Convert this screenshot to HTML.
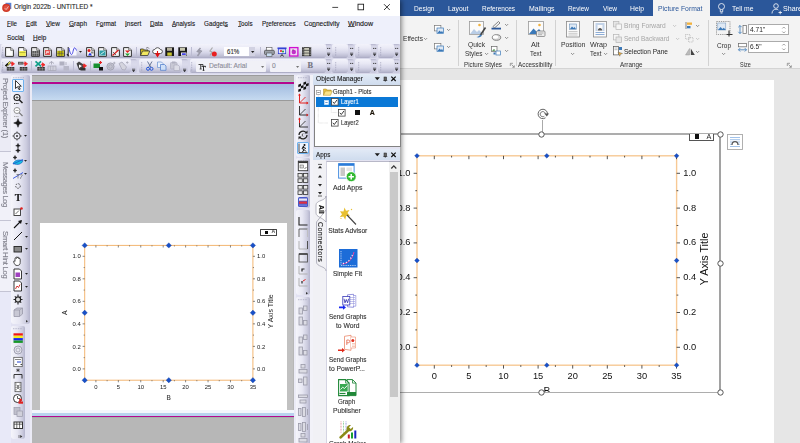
<!DOCTYPE html>
<html><head><meta charset="utf-8"><title>Origin 2022b and Word</title>
<style>
html,body{margin:0;padding:0}
body{width:800px;height:443px;position:relative;overflow:hidden;background:#e6e6e6;font-family:"Liberation Sans",sans-serif}
.a{position:absolute}
.t{position:absolute;white-space:nowrap;line-height:1}
svg{overflow:visible}
svg text{font-family:"Liberation Sans",sans-serif}
u{text-decoration-thickness:0.45px;text-underline-offset:0.4px;text-decoration-color:#555}
#og .t{-webkit-text-stroke:0.12px currentColor}
</style></head><body>
<div class="a" id="wd" style="left:0;top:0;width:800px;height:443px;will-change:transform">
<div class="a" style="left:400px;top:0px;width:400px;height:16.3px;background:#2b579a;"></div>
<div class="a" style="left:400px;top:16.3px;width:400px;height:52.9px;background:#f3f3f3;border-bottom:1px solid #d4d4d4;box-sizing:border-box;"></div>
<div class="a" style="left:652.5px;top:0px;width:57px;height:17px;background:#f3f3f3;"></div>
<div class="t" style="left:413.50px;top:6.03px;font-size:6.9px;color:#fff;transform-origin:0 0;transform:scaleX(0.9544);">Design</div>
<div class="t" style="left:447.50px;top:6.03px;font-size:6.9px;color:#fff;transform-origin:0 0;transform:scaleX(0.9895);">Layout</div>
<div class="t" style="left:481.50px;top:6.03px;font-size:6.9px;color:#fff;transform-origin:0 0;transform:scaleX(0.9352);">References</div>
<div class="t" style="left:528.50px;top:6.03px;font-size:6.9px;color:#fff;transform-origin:0 0;transform:scaleX(1.0075);">Mailings</div>
<div class="t" style="left:567.50px;top:6.03px;font-size:6.9px;color:#fff;transform-origin:0 0;transform:scaleX(0.9282);">Review</div>
<div class="t" style="left:602.50px;top:6.03px;font-size:6.9px;color:#fff;transform-origin:0 0;transform:scaleX(0.9439);">View</div>
<div class="t" style="left:629.50px;top:6.03px;font-size:6.9px;color:#fff;transform-origin:0 0;transform:scaleX(0.9865);">Help</div>
<div class="t" style="left:732.00px;top:6.03px;font-size:6.9px;color:#fff;transform-origin:0 0;transform:scaleX(0.9837);">Tell me</div>
<div class="t" style="left:783.00px;top:6.03px;font-size:6.9px;color:#fff;transform-origin:0 0;transform:scaleX(1.0319);">Share</div>
<div class="t" style="left:658.00px;top:6.03px;font-size:6.9px;color:#2b579a;transform-origin:0 0;transform:scaleX(0.9835);">Picture Format</div>
<svg class="a" style="left:717px;top:2px;" width="10" height="13" viewBox="0 0 10 13"><circle cx="4.5" cy="4.5" r="3" fill="none" stroke="#fff" stroke-width="0.8"/><path d="M3.3 7.5v2.3h2.4V7.5M3.5 11h2" fill="none" stroke="#fff" stroke-width="0.8"/></svg>
<svg class="a" style="left:771px;top:2px;" width="11" height="13" viewBox="0 0 11 13"><circle cx="5" cy="4" r="2.3" fill="none" stroke="#fff" stroke-width="0.8"/><path d="M1 11.5c0-3 2-4.3 4-4.3 1 0 1.700 .3 2.300 .8M7.500 10.500h3.500M9.200 8.800v3.500" fill="none" stroke="#fff" stroke-width="0.8"/></svg>
<div class="t" style="left:402.50px;top:35.03px;font-size:7.3px;color:#303030;transform-origin:0 0;transform:scaleX(0.9016);">Effects</div>
<svg class="a" style="left:424.3px;top:37.8px;" width="4" height="3" viewBox="0 0 4 3"><path d="M0 0l1.600 1.600l1.600 -1.600" fill="none" stroke="#555" stroke-width="0.6"/></svg>
<svg class="a" style="left:433.7px;top:25px;" width="10" height="9" viewBox="0 0 10 9"><rect x="0.4" y="0.4" width="6.5" height="5.5" fill="#fff" stroke="#777" stroke-width="0.7"/><rect x="3" y="3" width="6.500" height="5.500" fill="#dfe9f4" stroke="#3a78b8" stroke-width="0.7"/><path d="M3.500 8l2-2.500 1.500 1.500 1-1 1.300 2z" fill="#3a78b8"/></svg>
<svg class="a" style="left:446.5px;top:28.5px;" width="4" height="3" viewBox="0 0 4 3"><path d="M0 0l1.600 1.600l1.600 -1.600" fill="none" stroke="#555" stroke-width="0.6"/></svg>
<svg class="a" style="left:433.7px;top:42.5px;" width="10" height="9" viewBox="0 0 10 9"><rect x="0.4" y="0.4" width="6.5" height="5.5" fill="#fff" stroke="#777" stroke-width="0.7"/><rect x="3" y="3" width="6.500" height="5.500" fill="#dfe9f4" stroke="#3a78b8" stroke-width="0.7"/><path d="M3.500 8l2-2.500 1.500 1.500 1-1 1.300 2z" fill="#3a78b8"/></svg>
<svg class="a" style="left:446.5px;top:46px;" width="4" height="3" viewBox="0 0 4 3"><path d="M0 0l1.600 1.600l1.600 -1.600" fill="none" stroke="#555" stroke-width="0.6"/></svg>
<div class="a" style="left:458.2px;top:20px;width:0.8px;height:46px;background:#d2d2d2;"></div>
<svg class="a" style="left:468.5px;top:21px;" width="18" height="17" viewBox="0 0 18 17"><rect x="0.5" y="0.5" width="14" height="13" fill="#fbfbfb" stroke="#9a9a9a" stroke-width="0.8"/><path d="M1 13l4-5 3 3 2-2 4 4z" fill="#b9cde6"/><circle cx="10.500" cy="4" r="1.300" fill="#f2b13c"/><path d="M16.500 6.500l-5 7.500" stroke="#444" stroke-width="1.600"/><path d="M11.800 13.500c-1 .5-2.500 2.500-4.500 2.500 2.500 1 5 0 5.500-1.800z" fill="#3a78b8"/></svg>
<div class="t" style="left:468.20px;top:40.93px;font-size:7.3px;color:#303030;transform-origin:0 0;transform:scaleX(0.9110);">Quick</div>
<div class="t" style="left:464.55px;top:50.33px;font-size:7.3px;color:#303030;transform-origin:0 0;transform:scaleX(0.8803);">Styles</div>
<svg class="a" style="left:484.5px;top:52.5px;" width="4" height="3" viewBox="0 0 4 3"><path d="M0 0l1.600 1.600l1.600 -1.600" fill="none" stroke="#555" stroke-width="0.6"/></svg>
<svg class="a" style="left:491px;top:20.8px;" width="11" height="8" viewBox="0 0 11 8"><path d="M0.500 7.600h9.500" stroke="#2b579a" stroke-width="1.800"/><path d="M2 5.500l5.500-5 1.500 1.500-5.500 5z" fill="none" stroke="#555" stroke-width="0.7"/></svg>
<svg class="a" style="left:505px;top:24px;" width="4" height="3" viewBox="0 0 4 3"><path d="M0 0l1.600 1.600l1.600 -1.600" fill="none" stroke="#555" stroke-width="0.6"/></svg>
<svg class="a" style="left:491px;top:33.5px;" width="11" height="8" viewBox="0 0 11 8"><ellipse cx="5.500" cy="3.500" rx="4.200" ry="2.800" fill="#d8d8d8" stroke="#666" stroke-width="0.8"/><ellipse cx="4.500" cy="3" rx="2.800" ry="1.800" fill="#fff"/></svg>
<svg class="a" style="left:505px;top:37px;" width="4" height="3" viewBox="0 0 4 3"><path d="M0 0l1.600 1.600l1.600 -1.600" fill="none" stroke="#555" stroke-width="0.6"/></svg>
<svg class="a" style="left:491px;top:46px;" width="11" height="10" viewBox="0 0 11 10"><rect x="0.500" y="0.500" width="5.500" height="5" fill="#fff" stroke="#666" stroke-width="0.7"/><path d="M1 5l2-2 1.500 1.500z" fill="#3a8a3a"/><rect x="5" y="5" width="4.500" height="4" fill="#fff" stroke="#3a78b8" stroke-width="0.7"/><rect x="2.500" y="6.500" width="2" height="2" fill="#3a78b8"/></svg>
<svg class="a" style="left:505px;top:49.7px;" width="4" height="3" viewBox="0 0 4 3"><path d="M0 0l1.600 1.600l1.600 -1.600" fill="none" stroke="#555" stroke-width="0.6"/></svg>
<div class="t" style="left:463.70px;top:61.58px;font-size:6.6px;color:#303030;transform-origin:0 0;transform:scaleX(0.9418);">Picture Styles</div>
<svg class="a" style="left:510px;top:62.5px;" width="5" height="5" viewBox="0 0 5 5"><path d="M0.300 3V0.300H3M1.500 1.500l2.700 2.700M4.300 2.300v2h-2" fill="none" stroke="#666" stroke-width="0.6"/></svg>
<div class="a" style="left:515.5px;top:20px;width:0.8px;height:46px;background:#d2d2d2;"></div>
<svg class="a" style="left:527.5px;top:21px;" width="18" height="17" viewBox="0 0 18 17"><rect x="0.500" y="0.500" width="15" height="13" fill="#fbfbfb" stroke="#9a9a9a" stroke-width="0.8"/><path d="M1 13l4.500-5.500 3 3 2.500-2.500 4 5z" fill="#3a78b8"/><circle cx="11.500" cy="4" r="1.300" fill="#f2b13c"/><rect x="8.500" y="10" width="8.500" height="5.500" rx="1" fill="#ececec" stroke="#777" stroke-width="0.7"/><path d="M10 12h5.500M10 13.700h4" stroke="#888" stroke-width="0.6"/></svg>
<div class="t" style="left:531.05px;top:41.03px;font-size:7.3px;color:#303030;">Alt</div>
<div class="t" style="left:529.55px;top:50.33px;font-size:7.3px;color:#303030;transform-origin:0 0;transform:scaleX(0.8590);">Text</div>
<div class="t" style="left:518.00px;top:61.58px;font-size:6.6px;color:#303030;transform-origin:0 0;transform:scaleX(0.9598);">Accessibility</div>
<div class="a" style="left:554.5px;top:20px;width:0.8px;height:46px;background:#d2d2d2;"></div>
<svg class="a" style="left:566px;top:21px;" width="15" height="17" viewBox="0 0 15 17"><rect x="0.500" y="0.500" width="13" height="15.500" fill="#fbfbfb" stroke="#8a8a8a" stroke-width="0.8"/><rect x="3.500" y="3" width="7" height="5.500" fill="#dfe9f4" stroke="#6a8fb8" stroke-width="0.6"/><path d="M4 8l2-2.500 1.500 1.500 1-1 1.500 2z" fill="#3a78b8"/><path d="M2.500 10.500h9M2.500 12.300h9M2.500 14h9" stroke="#aaa" stroke-width="0.6"/></svg>
<div class="t" style="left:560.70px;top:41.03px;font-size:7.3px;color:#303030;transform-origin:0 0;transform:scaleX(0.9356);">Position</div>
<svg class="a" style="left:571.3px;top:52.5px;" width="4" height="3" viewBox="0 0 4 3"><path d="M0 0l1.600 1.600l1.600 -1.600" fill="none" stroke="#555" stroke-width="0.6"/></svg>
<svg class="a" style="left:592.5px;top:21px;" width="15" height="17" viewBox="0 0 15 17"><rect x="0.500" y="0.500" width="13" height="15.500" fill="#fbfbfb" stroke="#8a8a8a" stroke-width="0.8"/><path d="M2.500 3h9M2.500 5h2M9.500 5h2M2.500 7h2M9.500 7h2M2.500 9h2M9.500 9h2M2.500 11.500h9M2.500 13.500h9" stroke="#5b8ac5" stroke-width="0.7"/><path d="M4.800 9.500c0-3.500 4.400-3.500 4.400 0z" fill="#555"/></svg>
<div class="t" style="left:590.00px;top:41.03px;font-size:7.3px;color:#303030;transform-origin:0 0;transform:scaleX(0.9821);">Wrap</div>
<div class="t" style="left:590.00px;top:50.33px;font-size:7.3px;color:#303030;transform-origin:0 0;transform:scaleX(0.8590);">Text</div>
<svg class="a" style="left:603.5px;top:52.5px;" width="4" height="3" viewBox="0 0 4 3"><path d="M0 0l1.600 1.600l1.600 -1.600" fill="none" stroke="#555" stroke-width="0.6"/></svg>
<svg class="a" style="left:612.5px;top:20.5px;" width="10" height="9" viewBox="0 0 10 9"><rect x="0.400" y="0.400" width="5.500" height="5.500" fill="#e6e6e6" stroke="#b5b5b5" stroke-width="0.7"/><rect x="3" y="3" width="5.500" height="5.500" fill="#f6f6f6" stroke="#b5b5b5" stroke-width="0.7"/></svg>
<div class="t" style="left:623.50px;top:21.63px;font-size:7.3px;color:#a6a6a6;transform-origin:0 0;transform:scaleX(0.9118);">Bring Forward</div>
<svg class="a" style="left:672.5px;top:24.5px;" width="4" height="3" viewBox="0 0 4 3"><path d="M0 0l1.600 1.600l1.600 -1.600" fill="none" stroke="#b0b0b0" stroke-width="0.6"/></svg>
<svg class="a" style="left:612.5px;top:33.5px;" width="10" height="9" viewBox="0 0 10 9"><rect x="0.400" y="0.400" width="5.500" height="5.500" fill="#f6f6f6" stroke="#b5b5b5" stroke-width="0.7"/><rect x="3" y="3" width="5.500" height="5.500" fill="#e6e6e6" stroke="#b5b5b5" stroke-width="0.7"/></svg>
<div class="t" style="left:623.50px;top:34.63px;font-size:7.3px;color:#a6a6a6;transform-origin:0 0;transform:scaleX(0.8899);">Send Backward</div>
<svg class="a" style="left:675.5px;top:37.5px;" width="4" height="3" viewBox="0 0 4 3"><path d="M0 0l1.600 1.600l1.600 -1.600" fill="none" stroke="#b0b0b0" stroke-width="0.6"/></svg>
<svg class="a" style="left:612.5px;top:46px;" width="10" height="10" viewBox="0 0 10 10"><rect x="0.400" y="0.400" width="5" height="8.500" fill="#fff" stroke="#555" stroke-width="0.7"/><path d="M1.500 2h3M1.500 3.700h3" stroke="#777" stroke-width="0.5"/><path d="M5 6l4.500 1.500-2 .7-.7 2z" fill="#f2b13c" stroke="#555" stroke-width="0.4"/><rect x="6" y="1" width="3" height="3" fill="#3a78b8"/></svg>
<div class="t" style="left:623.50px;top:47.63px;font-size:7.3px;color:#262626;transform-origin:0 0;transform:scaleX(0.8960);">Selection Pane</div>
<svg class="a" style="left:685px;top:20.5px;" width="9" height="9" viewBox="0 0 9 9"><path d="M1 1v7" stroke="#555" stroke-width="0.7"/><rect x="2" y="1.500" width="5" height="2.300" fill="#f2b13c"/><rect x="2" y="5" width="3.500" height="2.300" fill="#3a78b8"/></svg>
<svg class="a" style="left:695.5px;top:24.5px;" width="4" height="3" viewBox="0 0 4 3"><path d="M0 0l1.600 1.600l1.600 -1.600" fill="none" stroke="#555" stroke-width="0.6"/></svg>
<svg class="a" style="left:685px;top:33.5px;" width="9" height="9" viewBox="0 0 9 9"><rect x="0.500" y="0.500" width="4.500" height="4.500" fill="none" stroke="#b0b0b0" stroke-width="0.7" stroke-dasharray="1 0.700"/><rect x="3.500" y="3.500" width="4.500" height="4.500" fill="none" stroke="#b0b0b0" stroke-width="0.7" stroke-dasharray="1 0.700"/></svg>
<svg class="a" style="left:695.5px;top:37.5px;" width="4" height="3" viewBox="0 0 4 3"><path d="M0 0l1.600 1.600l1.600 -1.600" fill="none" stroke="#b0b0b0" stroke-width="0.6"/></svg>
<svg class="a" style="left:685px;top:46.5px;" width="10" height="9" viewBox="0 0 10 9"><path d="M0.500 8l4-6.500v6.500z" fill="#bbb" stroke="#888" stroke-width="0.4"/><path d="M5.800 1.500v6.500h4z" fill="#444"/></svg>
<svg class="a" style="left:695.5px;top:50.5px;" width="4" height="3" viewBox="0 0 4 3"><path d="M0 0l1.600 1.600l1.600 -1.600" fill="none" stroke="#555" stroke-width="0.6"/></svg>
<div class="t" style="left:620.00px;top:61.58px;font-size:6.6px;color:#303030;transform-origin:0 0;transform:scaleX(0.9582);">Arrange</div>
<div class="a" style="left:707.5px;top:20px;width:0.8px;height:46px;background:#d2d2d2;"></div>
<svg class="a" style="left:716px;top:21px;" width="17" height="17" viewBox="0 0 17 17"><rect x="0.500" y="0.500" width="13.500" height="13" fill="none" stroke="#777" stroke-width="0.7" stroke-dasharray="1.300 0.900"/><rect x="1.800" y="2" width="8" height="7" fill="#dfe9f4" stroke="#6a8fb8" stroke-width="0.5"/><path d="M2 9l2.500-3 2 2 1.300-1.300 2 2.300z" fill="#3a78b8"/><path d="M13 9.500v6M10.500 13.500h6" stroke="#333" stroke-width="1.100" fill="none"/></svg>
<div class="t" style="left:717.00px;top:41.53px;font-size:7.3px;color:#303030;transform-origin:0 0;transform:scaleX(0.8848);">Crop</div>
<svg class="a" style="left:722.3px;top:52.5px;" width="4" height="3" viewBox="0 0 4 3"><path d="M0 0l1.600 1.600l1.600 -1.600" fill="none" stroke="#555" stroke-width="0.6"/></svg>
<svg class="a" style="left:737.5px;top:25px;" width="9" height="9" viewBox="0 0 9 9"><path d="M2 0.500v8M0.300 2.200l1.700-1.700 1.700 1.700M0.300 6.800l1.700 1.700 1.700-1.700" fill="none" stroke="#3a78b8" stroke-width="0.8"/><rect x="5" y="0.500" width="3.300" height="8" fill="#fff" stroke="#666" stroke-width="0.7"/></svg>
<svg class="a" style="left:737.5px;top:42.5px;" width="9" height="9" viewBox="0 0 9 9"><rect x="0.500" y="0.500" width="8" height="3.300" fill="#fff" stroke="#666" stroke-width="0.7"/><path d="M0.500 6.800h8M2.200 5.100l-1.700 1.700 1.700 1.700M6.800 5.100l1.700 1.700-1.700 1.700" fill="none" stroke="#3a78b8" stroke-width="0.8"/></svg>
<div class="a" style="left:748px;top:23.7px;width:40.5px;height:11.8px;background:#fff;border:0.8px solid #ababab;box-sizing:border-box;"></div>
<div class="t" style="left:750.00px;top:26.68px;font-size:6.6px;color:#262626;">4.71&quot;</div>
<svg class="a" style="left:782.3px;top:25.7px;" width="4" height="8" viewBox="0 0 4 8"><path d="M0.300 2.500l1.500-1.500 1.500 1.500M0.300 5.500l1.500 1.500 1.500-1.500" fill="none" stroke="#666" stroke-width="0.6"/></svg>
<div class="a" style="left:748px;top:41px;width:40.5px;height:11.8px;background:#fff;border:0.8px solid #ababab;box-sizing:border-box;"></div>
<div class="t" style="left:750.00px;top:43.98px;font-size:6.6px;color:#262626;">6.5&quot;</div>
<svg class="a" style="left:782.3px;top:43px;" width="4" height="8" viewBox="0 0 4 8"><path d="M0.300 2.500l1.500-1.500 1.500 1.500M0.300 5.500l1.500 1.500 1.500-1.500" fill="none" stroke="#666" stroke-width="0.6"/></svg>
<div class="t" style="left:740.00px;top:61.58px;font-size:6.6px;color:#303030;transform-origin:0 0;transform:scaleX(0.8334);">Size</div>
<svg class="a" style="left:787px;top:62.5px;" width="5" height="5" viewBox="0 0 5 5"><path d="M0.300 3V0.300H3M1.500 1.500l2.700 2.700M4.300 2.300v2h-2" fill="none" stroke="#666" stroke-width="0.6"/></svg>
<div class="a" style="left:400px;top:79.5px;width:374.3px;height:364px;background:#fff;"></div>
<div class="a" style="left:380px;top:133.4px;width:340px;height:1.2px;background:#adadad;"></div>
<div class="a" style="left:380px;top:392.2px;width:340px;height:1.2px;background:#adadad;"></div>
<div class="a" style="left:719.4px;top:134px;width:1.2px;height:259px;background:#a2a2a2;"></div>
<div class="a" style="left:541.7px;top:120px;width:0.9px;height:13px;background:#aaa;"></div>
<svg class="a" style="left:535.5px;top:107.5px;" width="14" height="14" viewBox="0 0 14 14"><path d="M9.500 9.800A4.700 4.700 0 1 1 11.500 6" fill="none" stroke="#555" stroke-width="0.9"/><path d="M8.300 8.300A2.600 2.600 0 1 1 9.400 6" fill="none" stroke="#555" stroke-width="0.8"/><path d="M8.300 5.500h4.800l-2.300 2.900z" fill="#555"/></svg>
<div class="a" style="left:688.8px;top:134.2px;width:24.8px;height:7.2px;background:#fff;border:0.8px solid #555;border-top:none;box-sizing:border-box;"></div>
<div class="a" style="left:695px;top:134.3px;width:4.3px;height:4.5px;background:#111;"></div>
<div class="t" style="left:706.50px;top:133.48px;font-size:7.2px;color:#222;">A</div>
<svg class="a" style="left:727px;top:134px;" width="16" height="16" viewBox="0 0 16 16"><rect x="0.500" y="0.500" width="15" height="15" fill="#fff" stroke="#a8a8a8" stroke-width="0.9"/><path d="M3 3.500h10M3 5.700h10M3 8h10M3 10.300h10M3 12.500h10" stroke="#8ab4e6" stroke-width="0.8"/><path d="M5 11c0-4.500 6-4.500 6 0" fill="#fff" stroke="#555" stroke-width="1.200"/></svg>
<svg class="a" style="left:0px;top:0px;" width="800" height="443" viewBox="0 0 800 443"><rect x="417" y="155.8" width="259.6" height="209.39999999999998" fill="none" stroke="#f7c995" stroke-width="1.4"/><path d="M434.30 365.2v3.40M434.30 155.8v3.40M451.60 365.2v1.70M451.60 155.8v1.70M468.90 365.2v3.40M468.90 155.8v3.40M486.20 365.2v1.70M486.20 155.8v1.70M503.50 365.2v3.40M503.50 155.8v3.40M520.80 365.2v1.70M520.80 155.8v1.70M538.10 365.2v3.40M538.10 155.8v3.40M555.40 365.2v1.70M555.40 155.8v1.70M572.70 365.2v3.40M572.70 155.8v3.40M590.00 365.2v1.70M590.00 155.8v1.70M607.30 365.2v3.40M607.30 155.8v3.40M624.60 365.2v1.70M624.60 155.8v1.70M641.90 365.2v3.40M641.90 155.8v3.40M659.20 365.2v1.70M659.20 155.8v1.70M676.50 365.2v3.40M676.50 155.8v3.40M417 347.30h-3.40M676.6 347.30h3.40M417 329.90h-1.70M676.6 329.90h1.70M417 312.50h-3.40M676.6 312.50h3.40M417 295.10h-1.70M676.6 295.10h1.70M417 277.70h-3.40M676.6 277.70h3.40M417 260.30h-1.70M676.6 260.30h1.70M417 242.90h-3.40M676.6 242.90h3.40M417 225.50h-1.70M676.6 225.50h1.70M417 208.10h-3.40M676.6 208.10h3.40M417 190.70h-1.70M676.6 190.70h1.70M417 173.30h-3.40M676.6 173.30h3.40" stroke="#333" stroke-width="0.84" fill="none"/><text x="434.30" y="379.20" font-size="9.3" text-anchor="middle" fill="#111">0</text><text x="468.90" y="379.20" font-size="9.3" text-anchor="middle" fill="#111">5</text><text x="503.50" y="379.20" font-size="9.3" text-anchor="middle" fill="#111">10</text><text x="538.10" y="379.20" font-size="9.3" text-anchor="middle" fill="#111">15</text><text x="572.70" y="379.20" font-size="9.3" text-anchor="middle" fill="#111">20</text><text x="607.30" y="379.20" font-size="9.3" text-anchor="middle" fill="#111">25</text><text x="641.90" y="379.20" font-size="9.3" text-anchor="middle" fill="#111">30</text><text x="676.50" y="379.20" font-size="9.3" text-anchor="middle" fill="#111">35</text><text x="410.50" y="349.75" font-size="9.3" text-anchor="end" fill="#111">0.0</text><text x="683.30" y="349.75" font-size="9.3" text-anchor="start" fill="#111">0.0</text><text x="410.50" y="314.95" font-size="9.3" text-anchor="end" fill="#111">0.2</text><text x="683.30" y="314.95" font-size="9.3" text-anchor="start" fill="#111">0.2</text><text x="410.50" y="280.15" font-size="9.3" text-anchor="end" fill="#111">0.4</text><text x="683.30" y="280.15" font-size="9.3" text-anchor="start" fill="#111">0.4</text><text x="410.50" y="245.35" font-size="9.3" text-anchor="end" fill="#111">0.6</text><text x="683.30" y="245.35" font-size="9.3" text-anchor="start" fill="#111">0.6</text><text x="410.50" y="210.55" font-size="9.3" text-anchor="end" fill="#111">0.8</text><text x="683.30" y="210.55" font-size="9.3" text-anchor="start" fill="#111">0.8</text><text x="410.50" y="175.75" font-size="9.3" text-anchor="end" fill="#111">1.0</text><text x="683.30" y="175.75" font-size="9.3" text-anchor="start" fill="#111">1.0</text><text transform="translate(707.60 258.90) rotate(-90)" font-size="10.8" text-anchor="middle" fill="#111">Y Axis Title</text><path d="M414.60 155.80L417.00 153.40L419.40 155.80L417.00 158.20z" fill="#1850c8" stroke="#0d3a94" stroke-width="0.3"/><path d="M544.40 155.80L546.80 153.40L549.20 155.80L546.80 158.20z" fill="#1850c8" stroke="#0d3a94" stroke-width="0.3"/><path d="M674.20 155.80L676.60 153.40L679.00 155.80L676.60 158.20z" fill="#1850c8" stroke="#0d3a94" stroke-width="0.3"/><path d="M414.60 260.50L417.00 258.10L419.40 260.50L417.00 262.90z" fill="#1850c8" stroke="#0d3a94" stroke-width="0.3"/><path d="M674.20 260.50L676.60 258.10L679.00 260.50L676.60 262.90z" fill="#1850c8" stroke="#0d3a94" stroke-width="0.3"/><path d="M414.60 365.20L417.00 362.80L419.40 365.20L417.00 367.60z" fill="#1850c8" stroke="#0d3a94" stroke-width="0.3"/><path d="M544.40 365.20L546.80 362.80L549.20 365.20L546.80 367.60z" fill="#1850c8" stroke="#0d3a94" stroke-width="0.3"/><path d="M674.20 365.20L676.60 362.80L679.00 365.20L676.60 367.60z" fill="#1850c8" stroke="#0d3a94" stroke-width="0.3"/></svg>
<div class="a" style="left:543.6px;top:386.9px;width:9px;height:5.6px;overflow:hidden"><div class="t" style="left:0;top:0;font-size:10.4px;color:#111">B</div></div>
<svg class="a" style="left:538.2px;top:130.5px;" width="7" height="7" viewBox="0 0 7 7"><circle cx="3.500" cy="3.500" r="2.700" fill="#fff" stroke="#555" stroke-width="1"/></svg>
<svg class="a" style="left:716.5px;top:130.5px;" width="7" height="7" viewBox="0 0 7 7"><circle cx="3.500" cy="3.500" r="2.700" fill="#fff" stroke="#555" stroke-width="1"/></svg>
<svg class="a" style="left:716.5px;top:259.5px;" width="7" height="7" viewBox="0 0 7 7"><circle cx="3.500" cy="3.500" r="2.700" fill="#fff" stroke="#555" stroke-width="1"/></svg>
<svg class="a" style="left:716.5px;top:389.3px;" width="7" height="7" viewBox="0 0 7 7"><circle cx="3.500" cy="3.500" r="2.700" fill="#fff" stroke="#555" stroke-width="1"/></svg>
<svg class="a" style="left:538.2px;top:389.3px;" width="7" height="7" viewBox="0 0 7 7"><circle cx="3.500" cy="3.500" r="2.700" fill="#fff" stroke="#555" stroke-width="1"/></svg>
</div>
<div class="a" id="og" style="left:0;top:0;width:400.4px;height:443px;background:#e2e2f2;box-shadow:1px 0 5px 0.5px rgba(0,0,0,.5)">
<div class="a" style="left:0px;top:0px;width:400.4px;height:15.6px;background:#fff;"></div>
<svg class="a" style="left:1.5px;top:1.7px;" width="10" height="11" viewBox="0 0 10 11"><rect x="3.500" y="0.800" width="5.800" height="6.200" fill="#5a80d0"/><circle cx="4.300" cy="5.900" r="4.100" fill="#d03a28"/><circle cx="4.300" cy="5.900" r="2.600" fill="#e05040"/><path d="M2.800 6.200l1.300 1.400 2.400-3.200" stroke="#f4d0d0" stroke-width="0.800" fill="none"/></svg>
<div class="t" style="left:14.00px;top:3.34px;font-size:7.5px;color:#2a2a2a;transform-origin:0 0;transform:scaleX(0.8600);">Origin 2022b - UNTITLED *</div>
<svg class="a" style="left:332px;top:3px;" width="60" height="9" viewBox="0 0 60 9"><path d="M0.300 4.400h5.800" stroke="#1a1a1a" stroke-width="0.8"/><rect x="26" y="1.200" width="5.600" height="5.600" fill="none" stroke="#1a1a1a" stroke-width="0.85"/><path d="M52 1.200l5.800 5.800M57.800 1.200l-5.800 5.800" stroke="#1a1a1a" stroke-width="0.85"/></svg>
<div class="a" style="left:0px;top:15.6px;width:400.4px;height:28.6px;background:#eef0fb;"></div>
<div class="t" style="left:7.00px;top:19.78px;font-size:7.0px;color:#161616;transform-origin:0 0;transform:scaleX(0.8865);"><u>F</u>ile</div>
<div class="t" style="left:26.20px;top:19.78px;font-size:7.0px;color:#161616;transform-origin:0 0;transform:scaleX(0.8953);"><u>E</u>dit</div>
<div class="t" style="left:46.20px;top:19.78px;font-size:7.0px;color:#161616;transform-origin:0 0;transform:scaleX(0.9171);"><u>V</u>iew</div>
<div class="t" style="left:68.70px;top:19.78px;font-size:7.0px;color:#161616;transform-origin:0 0;transform:scaleX(0.9252);"><u>G</u>raph</div>
<div class="t" style="left:95.70px;top:19.78px;font-size:7.0px;color:#161616;transform-origin:0 0;transform:scaleX(0.9021);">F<u>o</u>rmat</div>
<div class="t" style="left:124.50px;top:19.78px;font-size:7.0px;color:#161616;transform-origin:0 0;transform:scaleX(0.9253);"><u>I</u>nsert</div>
<div class="t" style="left:150.00px;top:19.78px;font-size:7.0px;color:#161616;transform-origin:0 0;transform:scaleX(0.8792);"><u>D</u>ata</div>
<div class="t" style="left:172.00px;top:19.78px;font-size:7.0px;color:#161616;transform-origin:0 0;transform:scaleX(0.8824);"><u>A</u>nalysis</div>
<div class="t" style="left:204.20px;top:19.78px;font-size:7.0px;color:#161616;transform-origin:0 0;transform:scaleX(0.8994);">Gadget<u>s</u></div>
<div class="t" style="left:237.50px;top:19.78px;font-size:7.0px;color:#161616;transform-origin:0 0;transform:scaleX(0.8873);"><u>T</u>ools</div>
<div class="t" style="left:261.50px;top:19.78px;font-size:7.0px;color:#161616;transform-origin:0 0;transform:scaleX(0.8876);">P<u>r</u>eferences</div>
<div class="t" style="left:304.00px;top:19.78px;font-size:7.0px;color:#161616;transform-origin:0 0;transform:scaleX(0.9311);">Co<u>n</u>nectivity</div>
<div class="t" style="left:348.20px;top:19.78px;font-size:7.0px;color:#161616;transform-origin:0 0;transform:scaleX(1.0041);"><u>W</u>indow</div>
<div class="t" style="left:7.00px;top:33.98px;font-size:7.0px;color:#161616;transform-origin:0 0;transform:scaleX(0.9021);">Socia<u>l</u></div>
<div class="t" style="left:33.00px;top:33.98px;font-size:7.0px;color:#161616;transform-origin:0 0;transform:scaleX(0.9169);"><u>H</u>elp</div>
<div class="a" style="left:0px;top:44px;width:400.4px;height:29.6px;background:#d8d8ea;"></div>
<div class="a" style="left:0.5px;top:44.1px;width:325.5px;height:14.4px;background:linear-gradient(#f3f3fb 0%,#e9e9f5 30%,#d6d6e8 62%,#bcbcd2 88%,#a9a9c2 100%);border-radius:2px 2.5px 2.5px 2px;"></div>
<div class="a" style="left:325.8px;top:44.1px;width:6px;height:14.4px;background:linear-gradient(#b4b4cc 0%,#d6d6e8 14%,#dadaeb 40%,#c6c6dc 100%);border-radius:0 2.500px 2.500px 0;"></div><svg class="a" style="left:327.2px;top:48.1px;" width="3.2" height="9" viewBox="0 0 3.2 9"><path d="M0 0.400h3.200" stroke="#222" stroke-width="0.8" stroke-dasharray="1.300 0.600"/><path d="M0 5.200h3.200" stroke="#222" stroke-width="0.700"/><path d="M0 6.200h3.200l-1.600 1.700z" fill="#111"/></svg>
<div class="a" style="left:1px;top:59.4px;width:130px;height:13.6px;background:linear-gradient(#f3f3fb 0%,#e9e9f5 30%,#d6d6e8 62%,#bcbcd2 88%,#a9a9c2 100%);border-radius:2px 2.5px 2.5px 2px;"></div>
<div class="a" style="left:131px;top:59.4px;width:6px;height:13.6px;background:linear-gradient(#b4b4cc 0%,#d6d6e8 14%,#dadaeb 40%,#c6c6dc 100%);border-radius:0 2.500px 2.500px 0;"></div><svg class="a" style="left:132.4px;top:64.0px;" width="3.2" height="9" viewBox="0 0 3.2 9"><path d="M0 5.200h3.200" stroke="#222" stroke-width="0.700"/><path d="M0 6.200h3.200l-1.600 1.700z" fill="#111"/></svg>
<div class="a" style="left:138.5px;top:59.4px;width:43.5px;height:13.6px;background:linear-gradient(#f3f3fb 0%,#e9e9f5 30%,#d6d6e8 62%,#bcbcd2 88%,#a9a9c2 100%);border-radius:2px 2.5px 2.5px 2px;"></div>
<div class="a" style="left:182px;top:59.4px;width:6px;height:13.6px;background:linear-gradient(#b4b4cc 0%,#d6d6e8 14%,#dadaeb 40%,#c6c6dc 100%);border-radius:0 2.500px 2.500px 0;"></div><svg class="a" style="left:183.4px;top:64.0px;" width="3.2" height="9" viewBox="0 0 3.2 9"><path d="M0 5.200h3.200" stroke="#222" stroke-width="0.700"/><path d="M0 6.200h3.200l-1.600 1.700z" fill="#111"/></svg>
<div class="a" style="left:189.5px;top:59.4px;width:136.5px;height:13.6px;background:linear-gradient(#f3f3fb 0%,#e9e9f5 30%,#d6d6e8 62%,#bcbcd2 88%,#a9a9c2 100%);border-radius:2px 2.5px 2.5px 2px;"></div>
<div class="a" style="left:325.8px;top:59.4px;width:6px;height:13.6px;background:linear-gradient(#b4b4cc 0%,#d6d6e8 14%,#dadaeb 40%,#c6c6dc 100%);border-radius:0 2.500px 2.500px 0;"></div><svg class="a" style="left:327.2px;top:62.6px;" width="3.2" height="9" viewBox="0 0 3.2 9"><path d="M0 0.400h3.200" stroke="#222" stroke-width="0.8" stroke-dasharray="1.300 0.600"/><path d="M0 5.200h3.200" stroke="#222" stroke-width="0.700"/><path d="M0 6.200h3.200l-1.600 1.700z" fill="#111"/></svg>
<div class="a" style="left:332.2px;top:44.1px;width:16.2px;height:14.4px;background:linear-gradient(#f3f3fb 0%,#e9e9f5 30%,#d6d6e8 62%,#bcbcd2 88%,#a9a9c2 100%);border-radius:2px 2.5px 2.5px 2px;"></div>
<svg class="a" style="left:334.7px;top:47.4px;" width="2" height="9" viewBox="0 0 2 9"><path d="M0.700 0v9" stroke="#9a9ab4" stroke-width="0.8" stroke-dasharray="0.800 0.900"/></svg>
<div class="a" style="left:348.2px;top:44.1px;width:6.2px;height:14.4px;background:linear-gradient(#b4b4cc 0%,#d6d6e8 14%,#dadaeb 40%,#c6c6dc 100%);border-radius:0 2.500px 2.500px 0;"></div><svg class="a" style="left:349.7px;top:48.1px;" width="3.2" height="9" viewBox="0 0 3.2 9"><path d="M0 0.400h3.200" stroke="#222" stroke-width="0.8" stroke-dasharray="1.300 0.600"/><path d="M0 5.200h3.200" stroke="#222" stroke-width="0.700"/><path d="M0 6.200h3.200l-1.600 1.700z" fill="#111"/></svg>
<div class="a" style="left:355px;top:44.1px;width:16.2px;height:14.4px;background:linear-gradient(#f3f3fb 0%,#e9e9f5 30%,#d6d6e8 62%,#bcbcd2 88%,#a9a9c2 100%);border-radius:2px 2.5px 2.5px 2px;"></div>
<svg class="a" style="left:357.5px;top:47.4px;" width="2" height="9" viewBox="0 0 2 9"><path d="M0.700 0v9" stroke="#9a9ab4" stroke-width="0.8" stroke-dasharray="0.800 0.900"/></svg>
<div class="a" style="left:371px;top:44.1px;width:6.2px;height:14.4px;background:linear-gradient(#b4b4cc 0%,#d6d6e8 14%,#dadaeb 40%,#c6c6dc 100%);border-radius:0 2.500px 2.500px 0;"></div><svg class="a" style="left:372.5px;top:48.1px;" width="3.2" height="9" viewBox="0 0 3.2 9"><path d="M0 0.400h3.200" stroke="#222" stroke-width="0.8" stroke-dasharray="1.300 0.600"/><path d="M0 5.200h3.200" stroke="#222" stroke-width="0.700"/><path d="M0 6.200h3.200l-1.600 1.700z" fill="#111"/></svg>
<div class="a" style="left:377.8px;top:44.1px;width:16.2px;height:14.4px;background:linear-gradient(#f3f3fb 0%,#e9e9f5 30%,#d6d6e8 62%,#bcbcd2 88%,#a9a9c2 100%);border-radius:2px 2.5px 2.5px 2px;"></div>
<svg class="a" style="left:380.3px;top:47.4px;" width="2" height="9" viewBox="0 0 2 9"><path d="M0.700 0v9" stroke="#9a9ab4" stroke-width="0.8" stroke-dasharray="0.800 0.900"/></svg>
<div class="a" style="left:393.8px;top:44.1px;width:6.2px;height:14.4px;background:linear-gradient(#b4b4cc 0%,#d6d6e8 14%,#dadaeb 40%,#c6c6dc 100%);border-radius:0 2.500px 2.500px 0;"></div><svg class="a" style="left:395.3px;top:48.1px;" width="3.2" height="9" viewBox="0 0 3.2 9"><path d="M0 0.400h3.200" stroke="#222" stroke-width="0.8" stroke-dasharray="1.300 0.600"/><path d="M0 5.200h3.200" stroke="#222" stroke-width="0.700"/><path d="M0 6.200h3.200l-1.600 1.700z" fill="#111"/></svg>
<div class="a" style="left:332.2px;top:59.4px;width:16.2px;height:13.6px;background:linear-gradient(#f3f3fb 0%,#e9e9f5 30%,#d6d6e8 62%,#bcbcd2 88%,#a9a9c2 100%);border-radius:2px 2.5px 2.5px 2px;"></div>
<svg class="a" style="left:334.7px;top:61.9px;" width="2" height="9" viewBox="0 0 2 9"><path d="M0.700 0v9" stroke="#9a9ab4" stroke-width="0.8" stroke-dasharray="0.800 0.900"/></svg>
<div class="a" style="left:348.2px;top:59.4px;width:6.2px;height:13.6px;background:linear-gradient(#b4b4cc 0%,#d6d6e8 14%,#dadaeb 40%,#c6c6dc 100%);border-radius:0 2.500px 2.500px 0;"></div><svg class="a" style="left:349.7px;top:62.6px;" width="3.2" height="9" viewBox="0 0 3.2 9"><path d="M0 0.400h3.200" stroke="#222" stroke-width="0.8" stroke-dasharray="1.300 0.600"/><path d="M0 5.200h3.200" stroke="#222" stroke-width="0.700"/><path d="M0 6.200h3.200l-1.600 1.700z" fill="#111"/></svg>
<div class="a" style="left:355px;top:59.4px;width:16.2px;height:13.6px;background:linear-gradient(#f3f3fb 0%,#e9e9f5 30%,#d6d6e8 62%,#bcbcd2 88%,#a9a9c2 100%);border-radius:2px 2.5px 2.5px 2px;"></div>
<svg class="a" style="left:357.5px;top:61.9px;" width="2" height="9" viewBox="0 0 2 9"><path d="M0.700 0v9" stroke="#9a9ab4" stroke-width="0.8" stroke-dasharray="0.800 0.900"/></svg>
<div class="a" style="left:371px;top:59.4px;width:6.2px;height:13.6px;background:linear-gradient(#b4b4cc 0%,#d6d6e8 14%,#dadaeb 40%,#c6c6dc 100%);border-radius:0 2.500px 2.500px 0;"></div><svg class="a" style="left:372.5px;top:62.6px;" width="3.2" height="9" viewBox="0 0 3.2 9"><path d="M0 0.400h3.200" stroke="#222" stroke-width="0.8" stroke-dasharray="1.300 0.600"/><path d="M0 5.200h3.200" stroke="#222" stroke-width="0.700"/><path d="M0 6.200h3.200l-1.600 1.700z" fill="#111"/></svg>
<div class="a" style="left:377.8px;top:59.4px;width:16.2px;height:13.6px;background:linear-gradient(#f3f3fb 0%,#e9e9f5 30%,#d6d6e8 62%,#bcbcd2 88%,#a9a9c2 100%);border-radius:2px 2.5px 2.5px 2px;"></div>
<svg class="a" style="left:380.3px;top:61.9px;" width="2" height="9" viewBox="0 0 2 9"><path d="M0.700 0v9" stroke="#9a9ab4" stroke-width="0.8" stroke-dasharray="0.800 0.900"/></svg>
<div class="a" style="left:393.8px;top:59.4px;width:6.2px;height:13.6px;background:linear-gradient(#b4b4cc 0%,#d6d6e8 14%,#dadaeb 40%,#c6c6dc 100%);border-radius:0 2.500px 2.500px 0;"></div><svg class="a" style="left:395.3px;top:62.6px;" width="3.2" height="9" viewBox="0 0 3.2 9"><path d="M0 0.400h3.200" stroke="#222" stroke-width="0.8" stroke-dasharray="1.300 0.600"/><path d="M0 5.200h3.200" stroke="#222" stroke-width="0.700"/><path d="M0 6.200h3.200l-1.600 1.700z" fill="#111"/></svg>
<svg class="a" style="left:1.5px;top:47.4px;" width="2" height="9" viewBox="0 0 2 9"><path d="M0.700 0v9" stroke="#9a9ab4" stroke-width="0.8" stroke-dasharray="0.800 0.900"/></svg>
<svg class="a" style="left:1.5px;top:61.9px;" width="2" height="9" viewBox="0 0 2 9"><path d="M0.700 0v9" stroke="#9a9ab4" stroke-width="0.8" stroke-dasharray="0.800 0.900"/></svg>
<svg class="a" style="left:140.5px;top:61.9px;" width="2" height="9" viewBox="0 0 2 9"><path d="M0.700 0v9" stroke="#9a9ab4" stroke-width="0.8" stroke-dasharray="0.800 0.900"/></svg>
<svg class="a" style="left:191px;top:61.9px;" width="2" height="9" viewBox="0 0 2 9"><path d="M0.700 0v9" stroke="#9a9ab4" stroke-width="0.8" stroke-dasharray="0.800 0.900"/></svg>
<div class="a" style="left:135.5px;top:46.9px;width:0.7px;height:10px;background:#bcbcd2;"></div>
<div class="a" style="left:191px;top:46.9px;width:0.7px;height:10px;background:#bcbcd2;"></div>
<div class="a" style="left:259.5px;top:46.9px;width:0.7px;height:10px;background:#bcbcd2;"></div>
<div class="a" style="left:31px;top:61.4px;width:0.7px;height:10px;background:#bcbcd2;"></div>
<div class="a" style="left:73px;top:61.4px;width:0.7px;height:10px;background:#bcbcd2;"></div>
<div class="a" style="left:90px;top:61.4px;width:0.7px;height:10px;background:#bcbcd2;"></div>
<svg class="a" style="left:5px;top:46.6px;" width="9" height="10" viewBox="0 0 9 10"><path d="M0.600 0.600h5.300l2.500 2.500v6.300h-7.800z" fill="#fdfdfd" stroke="#333" stroke-width="1"/><path d="M5.700 0.600v2.700h2.700" fill="#ddd" stroke="#333" stroke-width="0.600"/></svg>
<svg class="a" style="left:18px;top:46.6px;" width="9" height="10" viewBox="0 0 9 10"><path d="M0.600 0.600h5.300l2.500 2.500v6.300h-7.800z" fill="#fdfdfd" stroke="#333" stroke-width="1"/><path d="M5.700 0.600v2.700h2.700" fill="#ddd" stroke="#333" stroke-width="0.600"/><rect x="1.300" y="4" width="6.400" height="4.900" fill="#f0ec50"/><path d="M1.300 5.500h6.400" stroke="#8a8a20" stroke-width="0.500"/></svg>
<svg class="a" style="left:30.5px;top:46.6px;" width="9" height="10" viewBox="0 0 9 10"><path d="M0.600 0.600h5.300l2.500 2.500v6.300h-7.800z" fill="#e8e8e8" stroke="#333" stroke-width="1"/><path d="M5.700 0.600v2.700h2.700" fill="#ddd" stroke="#333" stroke-width="0.600"/><rect x="1.300" y="4" width="6.400" height="4.900" fill="#555"/><path d="M3.300 4v5M5.600 4v5M1.300 6.400h6.400" stroke="#bbb" stroke-width="0.500"/></svg>
<svg class="a" style="left:43px;top:46.6px;" width="9" height="10" viewBox="0 0 9 10"><path d="M0.600 0.600h5.300l2.500 2.500v6.300h-7.800z" fill="#e8e8e8" stroke="#333" stroke-width="1"/><path d="M5.700 0.600v2.700h2.700" fill="#ddd" stroke="#333" stroke-width="0.600"/><rect x="2" y="3" width="5" height="5" fill="#e05050"/><path d="M3 7l1-3 1 2 1-2" stroke="#fff" stroke-width="0.700" fill="none"/></svg>
<svg class="a" style="left:55.5px;top:46.6px;" width="9" height="10" viewBox="0 0 9 10"><path d="M0.600 0.600h5.300l2.500 2.500v6.300h-7.800z" fill="#e8e8e8" stroke="#333" stroke-width="1"/><path d="M5.700 0.600v2.700h2.700" fill="#ddd" stroke="#333" stroke-width="0.600"/><rect x="1.300" y="3.800" width="6.400" height="5.100" fill="#b8b400"/><path d="M3.300 3.800v5M5.600 3.800v5M1.300 6.400h6.400" stroke="#555" stroke-width="0.500"/></svg>
<svg class="a" style="left:66.5px;top:46.6px;" width="16" height="10" viewBox="0 0 16 10"><rect x="1.500" y="0.500" width="8" height="8" fill="#f8f8ff"/><path d="M1.200 0v9.500" stroke="#222" stroke-width="1"/><path d="M0 7l1.500 2" stroke="#222" stroke-width="1.200"/><path d="M2 1c1.500 8 3 8 4 3.500s2-5 3.500-1" stroke="#3a3ae0" stroke-width="0.900" fill="none"/><path d="M12 4h3l-1.500 1.800z" fill="#222"/></svg>
<svg class="a" style="left:86px;top:46.6px;" width="9" height="10" viewBox="0 0 9 10"><path d="M0.600 0.600h5.300l2.500 2.500v6.300h-7.800z" fill="#f4f4f4" stroke="#333" stroke-width="1"/><path d="M5.700 0.600v2.700h2.700" fill="#ddd" stroke="#333" stroke-width="0.600"/><circle cx="3" cy="3.500" r="1.500" fill="#e02020"/><path d="M2 8.500l2-3 2 3z" fill="#2030e0"/><rect x="5" y="4.500" width="2.500" height="2" fill="#888"/></svg>
<svg class="a" style="left:98px;top:46.6px;" width="9" height="10" viewBox="0 0 9 10"><path d="M0.600 0.600h5.300l2.500 2.500v6.300h-7.800z" fill="#f4f4f4" stroke="#333" stroke-width="1"/><path d="M5.700 0.600v2.700h2.700" fill="#ddd" stroke="#333" stroke-width="0.600"/><rect x="1.500" y="3.500" width="6" height="5" fill="#30a0a8"/><path d="M2.500 7.500l4-3" stroke="#fff" stroke-width="0.800"/></svg>
<svg class="a" style="left:110.7px;top:46.6px;" width="9" height="10" viewBox="0 0 9 10"><path d="M0.600 0.600h5.300l2.500 2.500v6.300h-7.800z" fill="#f4f4f4" stroke="#333" stroke-width="1"/><path d="M5.700 0.600v2.700h2.700" fill="#ddd" stroke="#333" stroke-width="0.600"/><path d="M1.500 8.500l6-5.500" stroke="#e02020" stroke-width="1.300"/><path d="M2 5l3 3" stroke="#333" stroke-width="0.700"/></svg>
<svg class="a" style="left:123px;top:46.6px;" width="9" height="10" viewBox="0 0 9 10"><path d="M0.600 0.600h5.300l2.500 2.500v6.300h-7.800z" fill="#f4f4f4" stroke="#333" stroke-width="1"/><path d="M5.700 0.600v2.700h2.700" fill="#ddd" stroke="#333" stroke-width="0.600"/><path d="M2 3.500l2.500 2.500 2.500-2.500z" fill="#e02020"/><path d="M2 6.500l2.500 2.500 2.500-2.500z" fill="#20a030"/></svg>
<svg class="a" style="left:140px;top:47.1px;" width="10" height="9" viewBox="0 0 10 9"><path d="M0.500 8.500v-6.500h3l1 1h3.500v1.500" fill="#d8c020" stroke="#333" stroke-width="0.800"/><path d="M0.500 8.500l2-4.500h7.300l-2 4.500z" fill="#f2e860" stroke="#333" stroke-width="0.800"/><path d="M6 1.500c1-1.500 2.500-1 3 0" stroke="#333" stroke-width="0.600" fill="none"/></svg>
<svg class="a" style="left:152px;top:46.6px;" width="11" height="10" viewBox="0 0 11 10"><path d="M2.500 6.500a2 2 0 0 1 .3-4 3 3 0 0 1 5.500 0 2 2 0 0 1 .2 4z" fill="#fff" stroke="#333" stroke-width="0.800"/><path d="M5.500 4v3.500M3.800 6.800l1.700 2.700 1.700-2.700z" stroke="#e01010" stroke-width="1.100" fill="#e01010"/></svg>
<svg class="a" style="left:165px;top:46.9px;" width="9.5" height="9.5" viewBox="0 0 9.5 9.5"><rect x="0.300" y="0.300" width="8.700" height="8.700" fill="#1a1a1a"/><rect x="2" y="0.800" width="5" height="3" fill="#b8b4a0"/><rect x="2.300" y="5.500" width="4.500" height="3.200" fill="#c8c430"/></svg>
<svg class="a" style="left:177.5px;top:46.9px;" width="9.5" height="9.5" viewBox="0 0 9.5 9.5"><rect x="0.300" y="0.300" width="8.700" height="8.700" fill="#1a1a1a"/><rect x="2" y="0.800" width="5" height="3" fill="#c8c8b0"/><rect x="3" y="5.500" width="5.500" height="3.200" fill="#fff"/><rect x="3.800" y="6.300" width="4" height="1.600" fill="#3030e0"/></svg>
<svg class="a" style="left:195px;top:46.6px;" width="9" height="10" viewBox="0 0 9 10"><path d="M5.500 1l-3 3.500 2.500 1-2.500 3.500M3 3l4 1.500" stroke="#9a9aa8" stroke-width="1.500" fill="none"/></svg>
<svg class="a" style="left:208px;top:46.6px;" width="10" height="10" viewBox="0 0 10 10"><path d="M4.500 0.500l-2.500 3.500 2 1-2 3.500" stroke="#aaa" stroke-width="1.200" fill="none"/><circle cx="6.300" cy="7" r="2.500" fill="#e82020"/></svg>
<div class="a" style="left:224px;top:46.8px;width:25.3px;height:9.7px;background:#fdfdff;"></div>
<div class="t" style="left:226.50px;top:48.62px;font-size:6.5px;color:#333;transform-origin:0 0;transform:scaleX(0.9455);">61%</div>
<div class="a" style="left:249.3px;top:46.8px;width:6px;height:9.7px;background:#d2d2e2;"></div>
<svg class="a" style="left:250.6px;top:50.7px;" width="3.5" height="2.5" viewBox="0 0 3.5 2.5"><path d="M0 0h3.400l-1.700 2z" fill="#222"/></svg>
<svg class="a" style="left:264px;top:46.6px;" width="11" height="10" viewBox="0 0 11 10"><rect x="2.500" y="0.500" width="5.500" height="3.500" fill="#fff" stroke="#555" stroke-width="0.600"/><rect x="0.500" y="3.300" width="9.800" height="4.200" rx="1" fill="#9aa0a8" stroke="#444" stroke-width="0.700"/><rect x="2.500" y="6" width="5.500" height="3.300" fill="#c8dcf0" stroke="#555" stroke-width="0.600"/></svg>
<svg class="a" style="left:277px;top:46.6px;" width="10" height="10" viewBox="0 0 10 10"><rect x="0.500" y="0.500" width="9" height="1.400" fill="#2030d0"/><rect x="1.300" y="1.900" width="7.400" height="4.800" fill="#e8e8ff" stroke="#2030d0" stroke-width="0.700"/><circle cx="4" cy="4" r="1" fill="#e02020"/><circle cx="6" cy="4.500" r="1" fill="#20a030"/><path d="M5 6.700v2M3 9.500l2-1.500 2 1.500" stroke="#222" stroke-width="0.700" fill="none"/></svg>
<svg class="a" style="left:289.3px;top:46.6px;" width="9.5" height="9.8" viewBox="0 0 9.5 9.8"><rect x="0.600" y="0.600" width="8.300" height="8.400" fill="#f0d8f4" stroke="#d010d0" stroke-width="1.300"/><circle cx="4.800" cy="5" r="2.200" fill="#c030c8"/><path d="M3 3h2" stroke="#555" stroke-width="0.600"/></svg>
<svg class="a" style="left:302px;top:46.9px;" width="9.5" height="9.5" viewBox="0 0 9.5 9.5"><rect x="0" y="0" width="9.200" height="9.200" fill="#333"/><rect x="2.200" y="0.800" width="4.800" height="2.100" fill="#c8c8b8"/><rect x="2.200" y="3.600" width="4.800" height="2.100" fill="#c8c8b8"/><rect x="2.200" y="6.400" width="4.800" height="2.100" fill="#c8c8b8"/><path d="M1.100 0v9.200M8.100 0v9.200" stroke="#ddd" stroke-width="0.800" stroke-dasharray="0.900 0.900"/></svg>
<svg class="a" style="left:4.5px;top:61.4px;" width="10.5" height="10" viewBox="0 0 10.5 10"><path d="M0.500 4.500l4-4 1.500 1-4 4z" fill="#f0f050" stroke="#222" stroke-width="0.600"/><path d="M0.500 5l2.500-2.500" stroke="#111" stroke-width="1.600"/><path d="M5.500 2.500h2.500M6.800 0.800l2.700 2-2.700 2z" fill="#f02828" stroke="#f02828" stroke-width="0.800"/><rect x="1.8" y="6" width="7.500" height="3.600" fill="#333"/><path d="M4.3 6v3.600M6.8 6v3.600M1.8 7.8h7.500" stroke="#ccc" stroke-width="0.400"/></svg>
<svg class="a" style="left:17.5px;top:61.4px;" width="10.5" height="10" viewBox="0 0 10.5 10"><rect x="0" y="0.800" width="5.500" height="2.800" fill="#555"/><path d="M1 2.200h3.500" stroke="#eee" stroke-width="0.600" stroke-dasharray="0.800 0.500"/><path d="M5.500 2.500h2.500M6.800 0.800l2.700 2-2.700 2z" fill="#f02828" stroke="#f02828" stroke-width="0.800"/><rect x="1.8" y="6" width="7.500" height="3.600" fill="#333"/><path d="M4.3 6v3.600M6.8 6v3.600M1.8 7.8h7.500" stroke="#ccc" stroke-width="0.400"/></svg>
<svg class="a" style="left:34.5px;top:61.4px;" width="10.5" height="10" viewBox="0 0 10.5 10"><path d="M0.500 0.300l5.500 5M6 0.300l-5.500 5" stroke="#10a088" stroke-width="1.700"/><g transform="translate(0.500 1)"><path d="M5.500 2.500h2.500M6.800 0.800l2.700 2-2.700 2z" fill="#f02828" stroke="#f02828" stroke-width="0.800"/></g><rect x="2.3" y="6" width="7.500" height="3.600" fill="#333"/><path d="M4.8 6v3.600M7.3 6v3.600M2.3 7.8h7.500" stroke="#ccc" stroke-width="0.400"/></svg>
<svg class="a" style="left:47px;top:61.4px;" width="10" height="10" viewBox="0 0 10 10"><path d="M2 2.500l2.500-2 2.500 2M4.500 0.500v3" stroke="#a8a8b8" stroke-width="0.900" fill="none"/><rect x="1" y="5" width="8" height="4.500" fill="#d0d0dc" stroke="#a0a0b0" stroke-width="0.600"/><path d="M3.500 5v4.500M6 5v4.500" stroke="#a0a0b0" stroke-width="0.500"/></svg>
<svg class="a" style="left:59px;top:61.4px;" width="10.5" height="10" viewBox="0 0 10.5 10"><rect x="0.500" y="0.500" width="5" height="4" fill="#b0b0c0"/><rect x="4.500" y="5" width="5.500" height="4.500" fill="#b8b8c8"/><path d="M7 1v3" stroke="#a0a0b0" stroke-width="0.700"/></svg>
<svg class="a" style="left:76px;top:61.4px;" width="10.5" height="10" viewBox="0 0 10.5 10"><path d="M0.500 2.500l2.500-2 6 4-1 4.500h-5z" fill="#444"/><path d="M3 3.500l3 1.500-3 2z" fill="#fff"/><g transform="translate(1 2)"><path d="M5.500 2.500h2.500M6.800 0.800l2.700 2-2.700 2z" fill="#f02828" stroke="#f02828" stroke-width="0.800"/></g><rect x="4.500" y="7" width="5" height="2.500" fill="#333"/></svg>
<svg class="a" style="left:93px;top:61.4px;" width="11" height="10" viewBox="0 0 11 10"><rect x="0.500" y="2.500" width="6.500" height="4.500" fill="#189030"/><path d="M6 1.500h3M7.500 0v3" stroke="#e82020" stroke-width="1.200"/><rect x="6" y="6" width="4" height="3.500" fill="#111"/></svg>
<svg class="a" style="left:105.5px;top:61.4px;" width="10" height="10" viewBox="0 0 10 10"><circle cx="4.500" cy="5.500" r="3.600" fill="#c4c4d0" stroke="#9c9cac" stroke-width="0.800"/><circle cx="4.500" cy="5.500" r="1.800" fill="none" stroke="#9c9cac" stroke-width="0.600"/><path d="M7 2h2.500M8.300 0.800v2.500" stroke="#a8a8b8" stroke-width="0.800"/></svg>
<svg class="a" style="left:118px;top:61.4px;" width="11" height="10" viewBox="0 0 11 10"><path d="M1 2.500l3-1.500 4.500 5-1.500 3-3-0.500z" fill="#d4d4de" stroke="#a4a4b4" stroke-width="0.700"/><path d="M8 1.500h2.500M9.300 0.300v2.500" stroke="#a8a8b8" stroke-width="0.800"/></svg>
<svg class="a" style="left:146px;top:61.4px;" width="8" height="10" viewBox="0 0 8 10"><path d="M1.500 0.500l3.500 6M6 0.500l-3.500 6" stroke="#5a6a8a" stroke-width="0.900"/><circle cx="2" cy="7.800" r="1.500" fill="none" stroke="#2858d8" stroke-width="1"/><circle cx="5.500" cy="7.800" r="1.500" fill="none" stroke="#2858d8" stroke-width="1"/></svg>
<svg class="a" style="left:157px;top:61.4px;" width="10" height="10" viewBox="0 0 10 10"><path d="M0.500 1h4l1.500 1.500v4h-5.500z" fill="#e8f0fc" stroke="#6a90d0" stroke-width="0.700"/><path d="M3.500 3.500h4l1.500 1.500v4.300h-5.500z" fill="#d0e0f8" stroke="#4a78c8" stroke-width="0.700"/></svg>
<svg class="a" style="left:170px;top:61.4px;" width="10" height="10" viewBox="0 0 10 10"><rect x="0.500" y="1.500" width="6.500" height="6.500" rx="0.800" fill="#c8c8d4" stroke="#a8a8b8" stroke-width="0.600"/><rect x="2" y="0.500" width="3.500" height="2" fill="#b0b0c0"/><path d="M4 4h4l1.500 1.500v4h-5.500z" fill="#dcdce6" stroke="#a8a8b8" stroke-width="0.600"/></svg>
<div class="a" style="left:195.5px;top:61.2px;width:70.5px;height:10.6px;background:#f1f1f7;border-radius:1px;"></div>
<svg class="a" style="left:197.5px;top:62.5px;" width="8" height="8" viewBox="0 0 8 8"><path d="M0.500 1.500h4.500v1.200M2.700 1.500v4.500M1.700 6h2" stroke="#333" stroke-width="0.900" fill="none"/><path d="M3.500 3.300h4v1M5.500 3.300v4M4.700 7.300h1.700" stroke="#111" stroke-width="0.900" fill="none"/></svg>
<div class="t" style="left:209.00px;top:63.33px;font-size:6.7px;color:#8c8c98;">Default: Arial</div>
<svg class="a" style="left:260.5px;top:65.6px;" width="3.5" height="2.5" viewBox="0 0 3.5 2.5"><path d="M0 0h3.200l-1.600 1.900z" fill="#777"/></svg>
<div class="a" style="left:269.5px;top:61.2px;width:31.5px;height:10.6px;background:#f1f1f7;border-radius:1px;"></div>
<div class="t" style="left:272.00px;top:63.33px;font-size:6.7px;color:#8c8c98;">0</div>
<svg class="a" style="left:296px;top:65.6px;" width="3.5" height="2.5" viewBox="0 0 3.5 2.5"><path d="M0 0h3.200l-1.600 1.900z" fill="#777"/></svg>
<div class="t" style="left:307.50px;top:62.45px;font-size:8.3px;color:#72727e;font-weight:bold;font-family:'Liberation Serif',serif;">B</div>
<div class="a" style="left:0px;top:74px;width:10.5px;height:369px;background:#e8e9f8;"></div>
<div class="a" style="left:0px;top:74px;width:10.5px;height:77.4px;background:#ebebf5;border-bottom:0.700px solid #c4c4d4;"></div>
<div class="t" style="left:8.6px;top:78px;font-size:7.8px;color:#7c7c88;transform-origin:0 0;transform:rotate(90deg);letter-spacing:-0.360px">Project Explorer (1)</div>
<div class="a" style="left:0px;top:152px;width:10.5px;height:68px;background:#f1f1f9;border-bottom:0.700px solid #c4c4d4;"></div>
<div class="t" style="left:8.6px;top:161.6px;font-size:7.8px;color:#7c7c88;transform-origin:0 0;transform:rotate(90deg);letter-spacing:-0.478px">Messages Log</div>
<div class="a" style="left:0px;top:220.7px;width:10.5px;height:70px;background:#f1f1f9;border-bottom:0.700px solid #c4c4d4;"></div>
<div class="t" style="left:8.6px;top:230.8px;font-size:7.8px;color:#7c7c88;transform-origin:0 0;transform:rotate(90deg);letter-spacing:-0.323px">Smart Hint Log</div>
<div class="a" style="left:10.5px;top:74.5px;width:19.7px;height:249px;background:linear-gradient(90deg,#f5f5fb 0%,#e7e7f3 45%,#ccccdf 80%,#b4b4cc 100%);border-radius:2px 2px 3px 3px;"></div>
<div class="a" style="left:10.5px;top:326px;width:14.7px;height:113px;background:linear-gradient(90deg,#f5f5fb 0%,#e7e7f3 45%,#ccccdf 80%,#b4b4cc 100%);border-radius:2px 2px 3px 3px;"></div>
<div class="a" style="left:30.2px;top:74.5px;width:1.6px;height:369px;background:#ebebf6;"></div>
<svg class="a" style="left:13px;top:76.7px;" width="12" height="2" viewBox="0 0 12 2"><path d="M0 0.700h11" stroke="#9a9ab4" stroke-width="0.800" stroke-dasharray="0.800 0.900"/></svg>
<svg class="a" style="left:13px;top:327.7px;" width="12" height="2" viewBox="0 0 12 2"><path d="M0 0.700h9" stroke="#9a9ab4" stroke-width="0.800" stroke-dasharray="0.800 0.900"/></svg>
<div class="a" style="left:11.5px;top:79px;width:12.7px;height:13px;background:#eef4fd;border:1px solid #6fb2ee;box-sizing:border-box;border-radius:1px;"></div>
<svg class="a" style="left:11.8px;top:79.3px;" width="12" height="12" viewBox="0 0 12 12"><path d="M3.500 1.500v8l2-1.800 1.500 3 1.200-.6-1.500-2.900h2.600z" fill="#fff" stroke="#222" stroke-width="0.900"/></svg>
<svg class="a" style="left:11.8px;top:93.0px;" width="12" height="12" viewBox="0 0 12 12"><circle cx="5" cy="4.500" r="3" fill="#fff" stroke="#222" stroke-width="1.100"/><path d="M7.200 6.700l3.300 3.300" stroke="#222" stroke-width="1.500"/><path d="M3.500 4.500h3M5 3v3" stroke="#222" stroke-width="0.700"/><path d="M2 10.500h5" stroke="#222" stroke-width="0.900" stroke-dasharray="1.100 0.600"/></svg>
<svg class="a" style="left:11.8px;top:105.5px;" width="12" height="12" viewBox="0 0 12 12"><circle cx="5" cy="4.500" r="3" fill="#fff" stroke="#888" stroke-width="0.900"/><path d="M7.200 6.700l3.300 3.300" stroke="#777" stroke-width="1.200"/><path d="M3.500 4.500h3" stroke="#888" stroke-width="0.700"/><path d="M2 10.500h5" stroke="#999" stroke-width="0.800" stroke-dasharray="1.100 0.600"/></svg>
<svg class="a" style="left:11.8px;top:117.2px;" width="12" height="12" viewBox="0 0 12 12"><path d="M6 1.7000000000000002L7.204 4.796L10.3 6L7.204 7.204L6 10.3L4.796 7.204L1.7000000000000002 6L4.796 4.796z" fill="#1a1a1a" stroke="#1a1a1a" stroke-width="0.5"/></svg>
<svg class="a" style="left:11.3px;top:129.5px;" width="12" height="12" viewBox="0 0 12 12"><circle cx="6" cy="6" r="3.200" fill="none" stroke="#222" stroke-width="0.800"/><circle cx="6" cy="6" r="0.900" fill="#222"/><path d="M6 1.500v1.300M6 9.200v1.300M1.500 6h1.300M9.200 6h1.300" stroke="#222" stroke-width="0.800"/></svg>
<svg class="a" style="left:24px;top:135px;" width="3" height="2" viewBox="0 0 3 2"><path d="M0 0h3l-1.500 1.700z" fill="#222"/></svg>
<svg class="a" style="left:11.8px;top:142.3px;" width="12" height="12" viewBox="0 0 12 12"><path d="M6 1.4000000000000004L6.644 3.056L8.3 3.7L6.644 4.344L6 6.0L5.356 4.344L3.7 3.7L5.356 3.056z" fill="#1a1a1a" stroke="#1a1a1a" stroke-width="0.5"/><path d="M6 6.2L6.644 7.856L8.3 8.5L6.644 9.144L6 10.8L5.356 9.144L3.7 8.5L5.356 7.856z" fill="#1a1a1a" stroke="#1a1a1a" stroke-width="0.5"/></svg>
<svg class="a" style="left:11.8px;top:154.8px;" width="12" height="12" viewBox="0 0 12 12"><path d="M3 0.5L3.56 1.94L5 2.5L3.56 3.06L3 4.5L2.44 3.06L1 2.5L2.44 1.94z" fill="#1a1a1a" stroke="#1a1a1a" stroke-width="0.5"/><path d="M1 8.500c2-3.500 5-4 10-3-1 3.500-5 5-10 3z" fill="#18c0e0" stroke="#2060c0" stroke-width="0.700"/><path d="M1 9l10-4.500" stroke="#2050d0" stroke-width="0.800"/></svg>
<svg class="a" style="left:24px;top:160px;" width="3" height="2" viewBox="0 0 3 2"><path d="M0 0h3l-1.500 1.700z" fill="#222"/></svg>
<svg class="a" style="left:11.8px;top:167.8px;" width="12" height="12" viewBox="0 0 12 12"><path d="M3 0.5L3.56 1.94L5 2.5L3.56 3.06L3 4.5L2.44 3.06L1 2.5L2.44 1.94z" fill="#1a1a1a" stroke="#1a1a1a" stroke-width="0.5"/><path d="M1 10.500l10-6" stroke="#3050e0" stroke-width="0.900"/><path d="M4.500 6.500h3M6 6.500v4M8.500 7c1.500-1 2.500 0 1 1.500s0 2.500-1.500 1.500" stroke="#666" stroke-width="0.700" fill="none"/></svg>
<svg class="a" style="left:24px;top:172.8px;" width="3" height="2" viewBox="0 0 3 2"><path d="M0 0h3l-1.500 1.700z" fill="#222"/></svg>
<svg class="a" style="left:11.8px;top:180.0px;" width="12" height="12" viewBox="0 0 12 12"><circle cx="6" cy="6" r="2.300" fill="none" stroke="#444" stroke-width="0.900" stroke-dasharray="1.500 1"/></svg>
<div class="t" style="left:14.75px;top:193.42px;font-size:10px;color:#111;font-weight:bold;font-family:'Liberation Serif',serif;">T</div>
<svg class="a" style="left:11.8px;top:205.5px;" width="12" height="12" viewBox="0 0 12 12"><rect x="2" y="3" width="6.500" height="6.500" fill="#fff" stroke="#333" stroke-width="0.900"/><path d="M3.500 8l3.500-3.500" stroke="#333" stroke-width="0.700"/><circle cx="9.500" cy="2.500" r="1.300" fill="#e02020"/></svg>
<svg class="a" style="left:11.8px;top:217.5px;" width="12" height="12" viewBox="0 0 12 12"><path d="M2 10l7-7" stroke="#111" stroke-width="1.100"/><path d="M10 2l-1 4-3-3z" fill="#111"/></svg>
<svg class="a" style="left:25px;top:223px;" width="3" height="2" viewBox="0 0 3 2"><path d="M0 0h3l-1.500 1.700z" fill="#222"/></svg>
<svg class="a" style="left:11.8px;top:230.0px;" width="12" height="12" viewBox="0 0 12 12"><path d="M2 10l8-8" stroke="#111" stroke-width="1"/></svg>
<svg class="a" style="left:25px;top:235.5px;" width="3" height="2" viewBox="0 0 3 2"><path d="M0 0h3l-1.500 1.700z" fill="#222"/></svg>
<svg class="a" style="left:11.8px;top:242.5px;" width="12" height="12" viewBox="0 0 12 12"><rect x="2" y="3.500" width="7.500" height="5.500" fill="#888" stroke="#222" stroke-width="0.900"/></svg>
<svg class="a" style="left:25px;top:248px;" width="3" height="2" viewBox="0 0 3 2"><path d="M0 0h3l-1.500 1.700z" fill="#222"/></svg>
<svg class="a" style="left:11.8px;top:255.3px;" width="12" height="12" viewBox="0 0 12 12"><path d="M3 6V3.500c0-1 1.300-1 1.300 0V2.500c0-1 1.300-1 1.300 0v.500c0-1 1.300-1 1.300 0V4c0-1 1.300-1 1.300 0v3.500c0 2-1 3-3 3s-2.500-1-3.500-3.500c-.5-1 .8-1.500 1.300-.500z" fill="#fff" stroke="#222" stroke-width="0.800"/></svg>
<svg class="a" style="left:11.8px;top:267.5px;" width="12" height="12" viewBox="0 0 12 12"><path d="M2 1h5.500l2 2v8h-7.500z" fill="#fff" stroke="#222" stroke-width="0.900"/><rect x="3.500" y="4.500" width="4.500" height="4.500" fill="#a040c0"/></svg>
<svg class="a" style="left:25px;top:273px;" width="3" height="2" viewBox="0 0 3 2"><path d="M0 0h3l-1.500 1.700z" fill="#222"/></svg>
<svg class="a" style="left:11.8px;top:280.0px;" width="12" height="12" viewBox="0 0 12 12"><path d="M2 1h5.500l2 2v8h-7.500z" fill="#fff" stroke="#222" stroke-width="0.900"/><path d="M3.500 9l1.500-3 1.500 1.500 1.500-3" stroke="#d02020" stroke-width="0.900" fill="none"/></svg>
<svg class="a" style="left:25px;top:285.5px;" width="3" height="2" viewBox="0 0 3 2"><path d="M0 0h3l-1.500 1.700z" fill="#222"/></svg>
<svg class="a" style="left:11.8px;top:292.5px;" width="12" height="12" viewBox="0 0 12 12"><circle cx="6" cy="6.500" r="2.600" fill="#ddd" stroke="#222" stroke-width="1.200"/><path d="M6 1.500v2M6 9.500v2M1.500 6.500h2M8.500 6.500h2M2.800 3.300l1.400 1.400M7.800 8.300l1.400 1.400M9.200 3.300l-1.400 1.400M4.200 8.300l-1.400 1.400" stroke="#222" stroke-width="1.100"/></svg>
<svg class="a" style="left:11.8px;top:305.5px;" width="12" height="12" viewBox="0 0 12 12"><path d="M2 4l3-2h5.500v6l-3 2.500h-5.500z" fill="#c8c8d4" stroke="#9898a8" stroke-width="0.800"/><path d="M2 4h5.500v6.500M7.500 4l3-2" stroke="#9898a8" stroke-width="0.700" fill="none"/></svg>
<svg class="a" style="left:26.3px;top:320px;" width="3" height="3" viewBox="0 0 3 3"><path d="M0 0l2 1.300-2 1.300z" fill="#333"/></svg>
<svg class="a" style="left:11.8px;top:331.6px;" width="12" height="12" viewBox="0 0 12 12"><rect x="1.500" y="1.300" width="9.300" height="2.400" fill="#f01818"/><rect x="1.500" y="3.700" width="9.300" height="2.400" fill="#f4f020"/><rect x="1.500" y="6.100" width="9.300" height="2.400" fill="#1828e8"/><rect x="1.500" y="8.500" width="9.300" height="2.400" fill="#189828"/></svg>
<svg class="a" style="left:11.8px;top:343.8px;" width="12" height="12" viewBox="0 0 12 12"><circle cx="6" cy="6" r="4" fill="#e4e4ee" stroke="#9a9aaa" stroke-width="0.900"/><circle cx="6" cy="6" r="2" fill="none" stroke="#9a9aaa" stroke-width="0.700"/></svg>
<svg class="a" style="left:11.8px;top:356.0px;" width="12" height="12" viewBox="0 0 12 12"><rect x="1.800" y="1.300" width="8.400" height="9.400" fill="#fff" stroke="#444" stroke-width="0.700"/><path d="M3 3.500h6M3 8.500h2" stroke="#555" stroke-width="0.700"/><path d="M5 6h4" stroke="#2040d0" stroke-width="1"/><path d="M8.500 8.500h1.500" stroke="#333" stroke-width="0.900"/></svg>
<svg class="a" style="left:11.8px;top:368.2px;" width="12" height="12" viewBox="0 0 12 12"><path d="M6 0.500v3.500M4.300 1.200l3.400 2M7.700 1.200l-3.400 2" stroke="#222" stroke-width="0.700"/><path d="M2 10.500v-4h8v4" stroke="#222" stroke-width="0.900" fill="none"/></svg>
<svg class="a" style="left:11.8px;top:380.7px;" width="12" height="12" viewBox="0 0 12 12"><rect x="3" y="1.300" width="6" height="9.400" fill="#fff" stroke="#444" stroke-width="0.700"/><path d="M4 2.500v7.500M8 2.500v7.500" stroke="#333" stroke-width="0.800" stroke-dasharray="1 0.800"/><rect x="5" y="4" width="2" height="4" fill="#888"/></svg>
<svg class="a" style="left:11.8px;top:393.3px;" width="12" height="12" viewBox="0 0 12 12"><circle cx="5.500" cy="5.500" r="4" fill="#fff" stroke="#333" stroke-width="1"/><path d="M5.500 3v2.500h2.500" stroke="#333" stroke-width="0.800" fill="none"/><circle cx="8.500" cy="7" r="1.500" fill="#e02020"/><rect x="6.500" y="8.500" width="4.500" height="2.200" fill="#e02020"/></svg>
<svg class="a" style="left:11.8px;top:405.8px;" width="12" height="12" viewBox="0 0 12 12"><rect x="2" y="1.500" width="6" height="7" fill="#c0c0cc" stroke="#9a9aaa" stroke-width="0.700"/><rect x="5" y="5" width="5.500" height="5.500" fill="#d0d0da" stroke="#9a9aaa" stroke-width="0.700"/></svg>
<svg class="a" style="left:11.8px;top:418.6px;" width="12" height="12" viewBox="0 0 12 12"><rect x="2" y="3" width="8.500" height="6.500" fill="#fff" stroke="#333" stroke-width="1"/><path d="M4.800 3v6.500M7.600 3v6.500M2 5.200h8.500" stroke="#333" stroke-width="0.700"/></svg>
<svg class="a" style="left:18.5px;top:434.5px;" width="4" height="3.5" viewBox="0 0 4 3.5"><path d="M0 0v3" stroke="#333" stroke-width="0.600"/><path d="M1.200 0l2.200 1.500-2.200 1.500z" fill="#333"/></svg>
<div class="a" style="left:31.8px;top:74.5px;width:262.7px;height:368.5px;background:#b7b7b7;"></div>
<div class="a" style="left:31.8px;top:74.5px;width:262.7px;height:1px;background:#9c9c9c;"></div>
<div class="a" style="left:31.8px;top:81px;width:262.7px;height:0.7px;background:#a4d0bc;"></div>
<div class="a" style="left:31.8px;top:81.7px;width:262.7px;height:1.85px;background:#b4098e;"></div>
<div class="a" style="left:31.8px;top:83.7px;width:262.7px;height:0.8px;background:#8cd4dc;"></div>
<div class="a" style="left:31.8px;top:84.4px;width:262.7px;height:15.8px;background:linear-gradient(#a3bcdf 0%,#b4cbe8 50%,#c6daf0 100%);"></div>
<div class="a" style="left:31.8px;top:100.2px;width:261.7px;height:310px;background:#c1c1c1;"></div>
<div class="a" style="left:31.8px;top:100.2px;width:262.7px;height:0.9px;background:#9a9a9a;"></div>
<div class="a" style="left:293.5px;top:101px;width:1px;height:310px;background:#eef2fa;"></div>
<div class="a" style="left:40.4px;top:223px;width:246.8px;height:187.2px;background:#fff;"></div>
<div class="a" style="left:31.8px;top:410.1px;width:262.7px;height:2.5px;background:#f3f7fc;"></div>
<div class="a" style="left:31.8px;top:412.5px;width:262.7px;height:3.3px;background:#b9d3ee;"></div>
<div class="a" style="left:31.8px;top:415.7px;width:262.7px;height:1.7px;background:#b4098e;"></div>
<div class="a" style="left:31.8px;top:417.4px;width:262.7px;height:0.7px;background:#a4b4a8;"></div>
<svg class="a" style="left:0px;top:0px;" width="400" height="443" viewBox="0 0 400 443"><rect x="84.7" y="245.4" width="168.2" height="134.79999999999998" fill="none" stroke="#f3b672" stroke-width="1.0"/><path d="M95.90 380.2v2.10M95.90 245.4v2.10M107.12 380.2v1.05M107.12 245.4v1.05M118.33 380.2v2.10M118.33 245.4v2.10M129.55 380.2v1.05M129.55 245.4v1.05M140.76 380.2v2.10M140.76 245.4v2.10M151.97 380.2v1.05M151.97 245.4v1.05M163.19 380.2v2.10M163.19 245.4v2.10M174.41 380.2v1.05M174.41 245.4v1.05M185.62 380.2v2.10M185.62 245.4v2.10M196.83 380.2v1.05M196.83 245.4v1.05M208.05 380.2v2.10M208.05 245.4v2.10M219.26 380.2v1.05M219.26 245.4v1.05M230.48 380.2v2.10M230.48 245.4v2.10M241.69 380.2v1.05M241.69 245.4v1.05M252.91 380.2v2.10M252.91 245.4v2.10M84.7 368.90h-2.10M252.9 368.90h2.10M84.7 357.64h-1.05M252.9 357.64h1.05M84.7 346.38h-2.10M252.9 346.38h2.10M84.7 335.12h-1.05M252.9 335.12h1.05M84.7 323.86h-2.10M252.9 323.86h2.10M84.7 312.60h-1.05M252.9 312.60h1.05M84.7 301.34h-2.10M252.9 301.34h2.10M84.7 290.08h-1.05M252.9 290.08h1.05M84.7 278.82h-2.10M252.9 278.82h2.10M84.7 267.56h-1.05M252.9 267.56h1.05M84.7 256.30h-2.10M252.9 256.30h2.10" stroke="#333" stroke-width="0.60" fill="none"/><text x="95.90" y="389.20" font-size="5.9" text-anchor="middle" fill="#1a1a1a">0</text><text x="118.33" y="389.20" font-size="5.9" text-anchor="middle" fill="#1a1a1a">5</text><text x="140.76" y="389.20" font-size="5.9" text-anchor="middle" fill="#1a1a1a">10</text><text x="163.19" y="389.20" font-size="5.9" text-anchor="middle" fill="#1a1a1a">15</text><text x="185.62" y="389.20" font-size="5.9" text-anchor="middle" fill="#1a1a1a">20</text><text x="208.05" y="389.20" font-size="5.9" text-anchor="middle" fill="#1a1a1a">25</text><text x="230.48" y="389.20" font-size="5.9" text-anchor="middle" fill="#1a1a1a">30</text><text x="252.91" y="389.20" font-size="5.9" text-anchor="middle" fill="#1a1a1a">35</text><text x="80.70" y="371.02" font-size="5.9" text-anchor="end" fill="#1a1a1a">0.0</text><text x="257.10" y="371.02" font-size="5.9" text-anchor="start" fill="#1a1a1a">0.0</text><text x="80.70" y="348.50" font-size="5.9" text-anchor="end" fill="#1a1a1a">0.2</text><text x="257.10" y="348.50" font-size="5.9" text-anchor="start" fill="#1a1a1a">0.2</text><text x="80.70" y="325.98" font-size="5.9" text-anchor="end" fill="#1a1a1a">0.4</text><text x="257.10" y="325.98" font-size="5.9" text-anchor="start" fill="#1a1a1a">0.4</text><text x="80.70" y="303.46" font-size="5.9" text-anchor="end" fill="#1a1a1a">0.6</text><text x="257.10" y="303.46" font-size="5.9" text-anchor="start" fill="#1a1a1a">0.6</text><text x="80.70" y="280.94" font-size="5.9" text-anchor="end" fill="#1a1a1a">0.8</text><text x="257.10" y="280.94" font-size="5.9" text-anchor="start" fill="#1a1a1a">0.8</text><text x="80.70" y="258.42" font-size="5.9" text-anchor="end" fill="#1a1a1a">1.0</text><text x="257.10" y="258.42" font-size="5.9" text-anchor="start" fill="#1a1a1a">1.0</text><text transform="translate(273.00 311.40) rotate(-90)" font-size="7.0" text-anchor="middle" fill="#1a1a1a">Y Axis Title</text><path d="M82.00 245.40L84.70 242.70L87.40 245.40L84.70 248.10z" fill="#1850c8" stroke="#0d3a94" stroke-width="0.3"/><path d="M166.10 245.40L168.80 242.70L171.50 245.40L168.80 248.10z" fill="#1850c8" stroke="#0d3a94" stroke-width="0.3"/><path d="M250.20 245.40L252.90 242.70L255.60 245.40L252.90 248.10z" fill="#1850c8" stroke="#0d3a94" stroke-width="0.3"/><path d="M82.00 312.80L84.70 310.10L87.40 312.80L84.70 315.50z" fill="#1850c8" stroke="#0d3a94" stroke-width="0.3"/><path d="M250.20 312.80L252.90 310.10L255.60 312.80L252.90 315.50z" fill="#1850c8" stroke="#0d3a94" stroke-width="0.3"/><path d="M82.00 380.20L84.70 377.50L87.40 380.20L84.70 382.90z" fill="#1850c8" stroke="#0d3a94" stroke-width="0.3"/><path d="M166.10 380.20L168.80 377.50L171.50 380.20L168.80 382.90z" fill="#1850c8" stroke="#0d3a94" stroke-width="0.3"/><path d="M250.20 380.20L252.90 377.50L255.60 380.20L252.90 382.90z" fill="#1850c8" stroke="#0d3a94" stroke-width="0.3"/></svg>
<div class="t" style="left:166.47px;top:395.37px;font-size:6.4px;color:#333;">B</div>
<div class="t" style="left:62.300px;top:315.200px;font-size:6.800px;color:#333;transform-origin:0 0;transform:rotate(-90deg)">A</div>
<div class="a" style="left:260.3px;top:229.2px;width:16.6px;height:6.9px;background:#fff;border:0.650px solid #444;box-sizing:border-box;border-radius:0.5px;"></div>
<div class="a" style="left:265.1px;top:231.3px;width:2.8px;height:2.7px;background:#0a0a0a;"></div>
<div class="t" style="left:271.80px;top:229.96px;font-size:4.8px;color:#333;">A</div>
<div class="a" style="left:294.4px;top:74.5px;width:1.8px;height:369px;background:#ebebf6;"></div>
<div class="a" style="left:296px;top:74.5px;width:14.3px;height:82px;background:linear-gradient(90deg,#f5f5fb 0%,#e7e7f3 45%,#ccccdf 80%,#b4b4cc 100%);border-radius:2px 2px 3px 3px;"></div>
<div class="a" style="left:296px;top:158px;width:14.3px;height:50px;background:linear-gradient(90deg,#f5f5fb 0%,#e7e7f3 45%,#ccccdf 80%,#b4b4cc 100%);border-radius:2px 2px 3px 3px;"></div>
<div class="a" style="left:296px;top:209.5px;width:14.3px;height:85.5px;background:linear-gradient(90deg,#f5f5fb 0%,#e7e7f3 45%,#ccccdf 80%,#b4b4cc 100%);border-radius:2px 2px 3px 3px;"></div>
<div class="a" style="left:296px;top:296.5px;width:14.3px;height:147px;background:linear-gradient(90deg,#f5f5fb 0%,#e7e7f3 45%,#ccccdf 80%,#b4b4cc 100%);border-radius:2px 2px 0 0;"></div>
<div class="a" style="left:310.3px;top:74.5px;width:3px;height:369px;background:#f2f2f8;"></div>
<svg class="a" style="left:298px;top:76.7px;" width="10" height="2" viewBox="0 0 10 2"><path d="M0 0.700h9" stroke="#9a9ab4" stroke-width="0.800" stroke-dasharray="0.800 0.900"/></svg>
<svg class="a" style="left:298px;top:160.2px;" width="10" height="2" viewBox="0 0 10 2"><path d="M0 0.700h9" stroke="#9a9ab4" stroke-width="0.800" stroke-dasharray="0.800 0.900"/></svg>
<svg class="a" style="left:298px;top:298.7px;" width="10" height="2" viewBox="0 0 10 2"><path d="M0 0.700h9" stroke="#9a9ab4" stroke-width="0.800" stroke-dasharray="0.800 0.900"/></svg>
<svg class="a" style="left:297.4px;top:79.5px;" width="12" height="12" viewBox="0 0 12 12"><g transform="translate(0.3 1.2) skewY(-22) scale(1.02 1.1)"><rect x="1.0" y="3.5" width="2.600" height="2.300" fill="#111"/><rect x="6.0" y="3.5" width="2.600" height="2.300" fill="#111"/><rect x="3.5" y="5.7" width="2.600" height="2.300" fill="#111"/><rect x="8.5" y="5.7" width="2.600" height="2.300" fill="#111"/><rect x="1.0" y="7.9" width="2.600" height="2.300" fill="#111"/><rect x="6.0" y="7.9" width="2.600" height="2.300" fill="#111"/></g></svg>
<svg class="a" style="left:297.4px;top:92.5px;" width="12" height="12" viewBox="0 0 12 12"><path d="M2.500 1v9h8.500" stroke="#e02020" stroke-width="1" fill="none"/><path d="M2.500 10l6-6" stroke="#e02020" stroke-width="0.900"/><path d="M1 2.500l1.500-2 1.500 2zM9.500 8.500l2 1.500-2 1.500z" fill="#e02020"/></svg>
<svg class="a" style="left:297.4px;top:105.0px;" width="12" height="12" viewBox="0 0 12 12"><path d="M2.500 1v9h8.500" stroke="#222" stroke-width="0.900" fill="none"/><path d="M2.500 10l6-6" stroke="#222" stroke-width="0.800"/><path d="M9.500 8.500l2 1.500-2 1.500z" fill="#e02020"/></svg>
<svg class="a" style="left:297.4px;top:117.0px;" width="12" height="12" viewBox="0 0 12 12"><path d="M2.500 1v9h8.500" stroke="#222" stroke-width="0.900" fill="none"/><path d="M2.500 10l6-6" stroke="#222" stroke-width="0.800"/><path d="M1 2.500l1.500-2 1.500 2z" fill="#e02020"/><path d="M2.500 1v5" stroke="#e02020" stroke-width="1"/></svg>
<svg class="a" style="left:297.4px;top:129.3px;" width="12" height="12" viewBox="0 0 12 12"><path d="M2 6a4 4 0 0 1 7-2.500M10 6a4 4 0 0 1-7 2.500" stroke="#222" stroke-width="1.200" fill="none"/><path d="M10.500 1.500v3h-3zM1.500 10.500v-3h3z" fill="#222"/><path d="M6 4.500c-1 .5-1 2.500 0 3" stroke="#222" stroke-width="0.800" fill="none"/></svg>
<div class="a" style="left:297.3px;top:142.2px;width:12.0px;height:12.3px;background:#eef4fd;border:1px solid #6fb2ee;box-sizing:border-box;border-radius:1px;"></div>
<svg class="a" style="left:297.4px;top:142.3px;" width="12" height="12" viewBox="0 0 12 12"><path d="M2 1.500v9h8.500" stroke="#222" stroke-width="0.800" fill="none"/><circle cx="7.500" cy="3" r="1" fill="#111"/><path d="M7 4l-2 2.500 2 1-1.500 2.500M5.500 5l3.500 1.500M7 7.500l2 2" stroke="#111" stroke-width="1" fill="none"/></svg>
<svg class="a" style="left:297.4px;top:160.0px;" width="12" height="12" viewBox="0 0 12 12"><rect x="1.300" y="1.300" width="9.400" height="9.400" fill="#fff" stroke="#333" stroke-width="0.900"/><path d="M1.300 2.300h9.400" stroke="#333" stroke-width="1.600"/><rect x="3" y="5" width="3.500" height="3" fill="#ddd" stroke="#555" stroke-width="0.500"/><path d="M7.500 9l2-2" stroke="#333" stroke-width="0.700"/></svg>
<svg class="a" style="left:297.4px;top:172.0px;" width="12" height="12" viewBox="0 0 12 12"><rect x="1" y="1.500" width="4.300" height="3.600" fill="#e8e8e8" stroke="#333" stroke-width="0.800"/><rect x="6.500" y="1.500" width="4.300" height="3.600" fill="#e8e8e8" stroke="#333" stroke-width="0.800"/><rect x="1" y="6.800" width="4.300" height="3.600" fill="#e8e8e8" stroke="#333" stroke-width="0.800"/><rect x="6.500" y="6.800" width="4.300" height="3.600" fill="#e8e8e8" stroke="#333" stroke-width="0.800"/></svg>
<svg class="a" style="left:297.4px;top:184.3px;" width="12" height="12" viewBox="0 0 12 12"><rect x="1" y="1.500" width="4.300" height="3.600" fill="#e8e8e8" stroke="#333" stroke-width="0.800"/><rect x="6.500" y="1.500" width="4.300" height="3.600" fill="#e8e8e8" stroke="#333" stroke-width="0.800"/><rect x="1" y="6.800" width="4.300" height="3.600" fill="#e8e8e8" stroke="#333" stroke-width="0.800"/><rect x="6.500" y="6.800" width="4.300" height="3.600" fill="#e8e8e8" stroke="#333" stroke-width="0.800"/></svg>
<svg class="a" style="left:297.4px;top:196.3px;" width="12" height="12" viewBox="0 0 12 12"><rect x="1" y="1" width="10" height="10" rx="1.500" fill="#4858c8"/><rect x="2" y="2.500" width="8" height="2.200" fill="#e8e8f8"/><rect x="2" y="5.500" width="8" height="2.200" fill="#e03040"/><rect x="2" y="8.300" width="8" height="1.700" fill="#6878d8"/></svg>
<svg class="a" style="left:297.4px;top:214.5px;" width="12" height="12" viewBox="0 0 12 12"><path d="M2 2v8h8.500" stroke="#222" stroke-width="1.100" fill="none"/></svg>
<svg class="a" style="left:297.4px;top:226.8px;" width="12" height="12" viewBox="0 0 12 12"><path d="M2 10v-8h8.500" stroke="#555" stroke-width="0.900" fill="none"/><path d="M10.500 2v8" stroke="#bbb" stroke-width="0.800"/></svg>
<svg class="a" style="left:297.4px;top:239.0px;" width="12" height="12" viewBox="0 0 12 12"><path d="M2 2v8h8.500v-8" stroke="#aaa" stroke-width="0.900" fill="none"/><path d="M10.500 2v8" stroke="#444" stroke-width="0.900"/></svg>
<svg class="a" style="left:297.4px;top:251.8px;" width="12" height="12" viewBox="0 0 12 12"><rect x="2" y="2" width="8.500" height="8" fill="none" stroke="#555" stroke-width="0.900"/><path d="M2 2h8.500" stroke="#222" stroke-width="1.200"/></svg>
<svg class="a" style="left:297.4px;top:264.0px;" width="12" height="12" viewBox="0 0 12 12"><path d="M2 2v8h8.500" stroke="#aaa" stroke-width="0.900" fill="none"/><path d="M5 7.500v-2.500h2.500" stroke="#222" stroke-width="1.200" fill="none"/></svg>
<svg class="a" style="left:297.4px;top:275.8px;" width="12" height="12" viewBox="0 0 12 12"><path d="M2 2v8h8.500" stroke="#aaa" stroke-width="0.900" fill="none"/><path d="M5 7.500v-2.500" stroke="#222" stroke-width="1.200" fill="none"/><path d="M6 5l2.500-1.500" stroke="#e02020" stroke-width="1"/></svg>
<svg class="a" style="left:305.5px;top:292px;" width="3" height="3" viewBox="0 0 3 3"><path d="M0 0l2 1.300-2 1.300z" fill="#333"/></svg>
<svg class="a" style="left:297.4px;top:303.7px;" width="12" height="12" viewBox="0 0 12 12"><rect x="2" y="4" width="3.500" height="6" fill="#dcdce4" stroke="#9a9aa8" stroke-width="0.800"/><rect x="6.500" y="2" width="3.500" height="4.500" fill="#dcdce4" stroke="#9a9aa8" stroke-width="0.800"/></svg>
<svg class="a" style="left:297.4px;top:315.0px;" width="12" height="12" viewBox="0 0 12 12"><rect x="2" y="2" width="3.500" height="8" fill="#dcdce4" stroke="#9a9aa8" stroke-width="0.800"/><rect x="6.500" y="5.500" width="3.500" height="4.500" fill="#dcdce4" stroke="#9a9aa8" stroke-width="0.800"/></svg>
<svg class="a" style="left:297.4px;top:332.5px;" width="12" height="12" viewBox="0 0 12 12"><rect x="2" y="4" width="3.500" height="6" fill="#dcdce4" stroke="#9a9aa8" stroke-width="0.800"/><rect x="6.500" y="2" width="3.500" height="4.500" fill="#dcdce4" stroke="#9a9aa8" stroke-width="0.800"/></svg>
<svg class="a" style="left:297.4px;top:345.0px;" width="12" height="12" viewBox="0 0 12 12"><rect x="2" y="2" width="3.500" height="8" fill="#dcdce4" stroke="#9a9aa8" stroke-width="0.800"/><rect x="6.500" y="5.500" width="3.500" height="4.500" fill="#dcdce4" stroke="#9a9aa8" stroke-width="0.800"/></svg>
<svg class="a" style="left:297.4px;top:362.6px;" width="12" height="12" viewBox="0 0 12 12"><rect x="4" y="1.500" width="4" height="3.500" fill="#dcdce4" stroke="#9a9aa8" stroke-width="0.800"/><rect x="2" y="6.500" width="8" height="3.500" fill="#dcdce4" stroke="#9a9aa8" stroke-width="0.800"/></svg>
<svg class="a" style="left:297.4px;top:375.0px;" width="12" height="12" viewBox="0 0 12 12"><rect x="1.500" y="4" width="3.500" height="3.500" fill="#dcdce4" stroke="#9a9aa8" stroke-width="0.800"/><rect x="6.500" y="2" width="3.500" height="8" fill="#dcdce4" stroke="#9a9aa8" stroke-width="0.800"/></svg>
<svg class="a" style="left:297.4px;top:392.8px;" width="12" height="12" viewBox="0 0 12 12"><rect x="1.500" y="2" width="9" height="2.500" fill="#dcdce4" stroke="#9a9aa8" stroke-width="0.800"/><rect x="3" y="7" width="6" height="3" fill="#dcdce4" stroke="#9a9aa8" stroke-width="0.800"/></svg>
<svg class="a" style="left:297.4px;top:405.5px;" width="12" height="12" viewBox="0 0 12 12"><rect x="1.500" y="2.500" width="2.500" height="7" fill="#dcdce4" stroke="#9a9aa8" stroke-width="0.800"/><rect x="5.500" y="1.500" width="3" height="9" fill="#dcdce4" stroke="#9a9aa8" stroke-width="0.800"/><path d="M10.500 3v6" stroke="#9a9aa8" stroke-width="0.800"/></svg>
<svg class="a" style="left:297.4px;top:420.5px;" width="12" height="12" viewBox="0 0 12 12"><rect x="1.500" y="2.500" width="2.500" height="7" fill="#dcdce4" stroke="#9a9aa8" stroke-width="0.800"/><rect x="5.500" y="1.500" width="3" height="9" fill="#dcdce4" stroke="#9a9aa8" stroke-width="0.800"/><path d="M10.500 3v6" stroke="#9a9aa8" stroke-width="0.800"/></svg>
<svg class="a" style="left:297.4px;top:432.0px;" width="12" height="12" viewBox="0 0 12 12"><rect x="4" y="1.500" width="4" height="3.500" fill="#dcdce4" stroke="#9a9aa8" stroke-width="0.800"/><rect x="2" y="6.500" width="8" height="3.500" fill="#dcdce4" stroke="#9a9aa8" stroke-width="0.800"/></svg>
<div class="a" style="left:313.3px;top:74.3px;width:87.1px;height:369px;background:#e3e3f1;"></div>
<div class="a" style="left:313.3px;top:74.3px;width:87.1px;height:11px;background:linear-gradient(#e2eaf6 0%,#cfdcee 100%);"></div>
<div class="t" style="left:316.00px;top:76.33px;font-size:6.9px;color:#1c1c1c;transform-origin:0 0;transform:scaleX(0.9574);">Object Manager</div>
<svg class="a" style="left:375px;top:76.3px;" width="22" height="6" viewBox="0 0 22 6"><path d="M-0.300 1.300h5.200l-2.600 2.900z" fill="#1a1a1a"/><rect x="9" y="1" width="2.600" height="3.300" fill="#666" stroke="#222" stroke-width="0.500"/><path d="M8.300 4.500h4M10.300 4.500v1.300" stroke="#222" stroke-width="0.600"/><path d="M16.300 0.600l4.400 4.400M20.700 0.600l-4.400 4.400" stroke="#111" stroke-width="1.200"/></svg>
<div class="a" style="left:314.3px;top:85.3px;width:86.3px;height:61.5px;background:#fff;border:0.900px solid #828282;box-sizing:border-box;"></div>
<svg class="a" style="left:314px;top:85px;" width="86" height="62" viewBox="0 0 86 62"><path d="M4.300 10v7h5.500M17.300 22v5.500h6M4.300 17v21h10" stroke="#c8c8c8" stroke-width="0.600" fill="none" stroke-dasharray="0.600 0.600"/></svg>
<svg class="a" style="left:316px;top:89.7px;" width="5" height="5" viewBox="0 0 5 5"><rect x="0.400" y="0.400" width="4.200" height="4.200" fill="#fff" stroke="#888" stroke-width="0.600"/><path d="M1.300 2.500h2.400" stroke="#444" stroke-width="0.600"/></svg>
<svg class="a" style="left:322.5px;top:88px;" width="10" height="8" viewBox="0 0 10 8"><path d="M0.500 7.300v-6.300h2.800l.8 1h4v1.300" fill="#e8c040" stroke="#a88820" stroke-width="0.500"/><path d="M0.500 7.300l1.800-4.300h7l-1.800 4.300z" fill="#fae388" stroke="#a88820" stroke-width="0.500"/></svg>
<div class="t" style="left:333.00px;top:89.03px;font-size:6.7px;color:#333;transform-origin:0 0;transform:scaleX(0.8913);">Graph1 - Plots</div>
<div class="a" style="left:315.7px;top:97.3px;width:82.7px;height:9.3px;background:#0a78d6;"></div>
<svg class="a" style="left:323.5px;top:99.6px;" width="5" height="5" viewBox="0 0 5 5"><rect x="0.400" y="0.400" width="4.200" height="4.200" fill="#fff" stroke="#d0e4f8" stroke-width="0.600"/><path d="M1.300 2.500h2.400" stroke="#0a58b6" stroke-width="0.600"/></svg>
<svg class="a" style="left:330.7px;top:98.3px;" width="8" height="8" viewBox="0 0 8 8"><rect x="0.500" y="0.500" width="6.600" height="6.600" fill="#fff" stroke="#444" stroke-width="0.800"/><path d="M1.800 3.800l1.500 1.700 2.700-3.600" stroke="#222" stroke-width="0.900" fill="none"/></svg>
<div class="t" style="left:340.70px;top:98.93px;font-size:6.7px;color:#fff;transform-origin:0 0;transform:scaleX(0.8640);">Layer1</div>
<svg class="a" style="left:338px;top:108.8px;" width="8" height="8" viewBox="0 0 8 8"><rect x="0.500" y="0.500" width="6.600" height="6.600" fill="#fff" stroke="#444" stroke-width="0.800"/><path d="M1.800 3.800l1.500 1.700 2.700-3.600" stroke="#222" stroke-width="0.900" fill="none"/></svg>
<div class="a" style="left:355.2px;top:110.3px;width:5px;height:5px;background:#111;"></div>
<div class="t" style="left:369.80px;top:109.38px;font-size:7px;color:#1c1408;font-weight:bold;">A</div>
<svg class="a" style="left:330.7px;top:119.3px;" width="8" height="8" viewBox="0 0 8 8"><rect x="0.500" y="0.500" width="6.600" height="6.600" fill="#fff" stroke="#444" stroke-width="0.800"/><path d="M1.800 3.800l1.500 1.700 2.700-3.600" stroke="#222" stroke-width="0.900" fill="none"/></svg>
<div class="t" style="left:340.70px;top:119.93px;font-size:6.7px;color:#333;transform-origin:0 0;transform:scaleX(0.8640);">Layer2</div>
<div class="a" style="left:313.3px;top:148.5px;width:87.1px;height:11.7px;background:linear-gradient(#e2eaf6 0%,#cfdcee 100%);"></div>
<div class="t" style="left:316.00px;top:152.03px;font-size:6.9px;color:#1c1c1c;transform-origin:0 0;transform:scaleX(0.9092);">Apps</div>
<svg class="a" style="left:375px;top:151.5px;" width="22" height="6" viewBox="0 0 22 6"><path d="M-0.300 1.300h5.200l-2.600 2.900z" fill="#1a1a1a"/><rect x="9" y="1" width="2.600" height="3.300" fill="#666" stroke="#222" stroke-width="0.500"/><path d="M8.300 4.500h4M10.300 4.500v1.300" stroke="#222" stroke-width="0.600"/><path d="M16.300 0.600l4.400 4.400M20.700 0.600l-4.400 4.400" stroke="#111" stroke-width="1.200"/></svg>
<div class="a" style="left:313.3px;top:160.2px;width:12.5px;height:283px;background:#f1f1f5;"></div>
<div class="a" style="left:325.6px;top:160.7px;width:63.6px;height:283px;background:#fff;border-left:0.700px solid #d4d4e2;border-top:0.700px solid #b8b8c8;box-sizing:border-box;"></div>
<div class="a" style="left:389.2px;top:160.7px;width:10.6px;height:283px;background:#f0f0f0;border-top:0.700px solid #a8a8b8;box-sizing:border-box;"></div>
<div class="a" style="left:389.9px;top:172.3px;width:7.8px;height:224.7px;background:#c9c9c9;"></div>
<svg class="a" style="left:391.3px;top:165px;" width="6" height="4" viewBox="0 0 6 4"><path d="M0.300 3.500l2.500-2.700 2.500 2.700" stroke="#333" stroke-width="1.200" fill="none"/></svg>
<svg class="a" style="left:317.5px;top:163.5px;" width="4" height="5" viewBox="0 0 4 5"><path d="M0 0.400h4" stroke="#222" stroke-width="0.700"/><path d="M0 4.300l2-2.600 2 2.600z" fill="#222"/></svg>
<svg class="a" style="left:317.5px;top:174.5px;" width="4" height="3" viewBox="0 0 4 3"><path d="M0 2.600l2-2.600 2 2.600z" fill="#222"/></svg>
<svg class="a" style="left:317.5px;top:184px;" width="4" height="3" viewBox="0 0 4 3"><path d="M0 0l2 2.600 2-2.600z" fill="#222"/></svg>
<svg class="a" style="left:317.5px;top:192px;" width="4" height="5" viewBox="0 0 4 5"><path d="M0 0l2 2.600 2-2.600z" fill="#222"/><path d="M0 4h4" stroke="#222" stroke-width="0.700"/></svg>
<svg class="a" style="left:313.6px;top:196px;" width="12" height="76" viewBox="0 0 12 76"><path d="M12 0C12 5 2 4 2 9V17C2 21 8 21 12 26z" fill="#fff" stroke="#8c8c9c" stroke-width="0.600"/><path d="M12 14L2.500 26V66C2.500 71 12 70 12 75" fill="none" stroke="#8c8c9c" stroke-width="0.600"/></svg>
<div class="t" style="left:323.600px;top:205.300px;font-size:6.800px;font-weight:bold;color:#111;transform-origin:0 0;transform:rotate(90deg)">All</div>
<div class="t" style="left:323.600px;top:221.500px;font-size:7px;color:#222;transform-origin:0 0;transform:rotate(90deg);letter-spacing:0.450px">Connectors</div>
<svg class="a" style="left:338px;top:163px;" width="19" height="18" viewBox="0 0 19 18"><rect x="0.600" y="0.600" width="15.500" height="14.500" fill="#fff" stroke="#4a90e0" stroke-width="1"/><rect x="0.600" y="0.600" width="15.500" height="2.200" fill="#2a7ad8"/><rect x="2.500" y="4.500" width="4.500" height="8.500" fill="#c8c8c8"/><rect x="8.500" y="4.500" width="5.500" height="3.500" fill="#e4e4e4"/><circle cx="13.200" cy="13.700" r="5" fill="#30b830" stroke="#fff" stroke-width="0.800"/><path d="M10.500 13.700h5.400M13.200 11v5.400" stroke="#fff" stroke-width="1.500"/></svg>
<div class="t" style="left:332.85px;top:185.33px;font-size:6.7px;color:#333;transform-origin:0 0;transform:scaleX(1.0284);">Add Apps</div>
<svg class="a" style="left:339px;top:207px;" width="19" height="19" viewBox="0 0 19 19"><path d="M5.500 0.500l1.500 3.300 3.500-.8-2 3 2.500 2.800-3.800.2-1 3.700-1.800-3.300-3.700.8 2.300-3-2-3 3.500.2z" fill="#e8c030"/><path d="M8 8l9 9.500" stroke="#444" stroke-width="1.100"/><circle cx="12.500" cy="2.500" r="0.700" fill="#e8c030"/><circle cx="2" cy="11.500" r="0.600" fill="#e8c030"/></svg>
<div class="t" style="left:328.30px;top:228.03px;font-size:6.7px;color:#333;">Stats Advisor</div>
<svg class="a" style="left:338.5px;top:248.7px;" width="19" height="19" viewBox="0 0 19 19"><rect x="0" y="0" width="18.500" height="18.500" fill="#1c6cd8"/><path d="M2 2v14.500h15" stroke="#fff" stroke-width="0.700" fill="none" stroke-dasharray="1 0.800"/><path d="M3 15c6-.5 10-4 12-12" stroke="#f040a0" stroke-width="1" fill="none"/><path d="M4 14.500l3-.8 3-2.200 2.500-3.500 1.500-3.500" stroke="#fff" stroke-width="1.400" fill="none" stroke-dasharray="0.900 2.200"/></svg>
<div class="t" style="left:332.80px;top:270.53px;font-size:6.7px;color:#333;transform-origin:0 0;transform:scaleX(0.9737);">Simple Fit</div>
<svg class="a" style="left:339px;top:293.5px;" width="18" height="16" viewBox="0 0 18 16"><path d="M8.500 0.800l6 -0.500v13l-6 -0.500z" fill="#fff" stroke="#6868d0" stroke-width="0.700"/><path d="M14.500 1.500h2.300v10.700h-2.300" fill="#fff" stroke="#7878d8" stroke-width="0.600"/><path d="M11 3.500h5M11 5.500h5M11 7.500h5M11 9.500h5" stroke="#8888d8" stroke-width="0.500"/><rect x="3.800" y="2.500" width="7" height="8.500" fill="#fff" stroke="#3838b8" stroke-width="0.800"/><path d="M5 4.800l1 4 1.300-3.300 1.300 3.300 1-4" stroke="#2828a8" stroke-width="0.800" fill="none"/><path d="M0 12.600h4v-1.600l3 2.400-3 2.400v-1.600h-4z" fill="#1828f0"/></svg>
<div class="t" style="left:328.55px;top:313.73px;font-size:6.7px;color:#333;transform-origin:0 0;transform:scaleX(0.9498);">Send Graphs</div>
<div class="t" style="left:335.55px;top:322.73px;font-size:6.7px;color:#333;transform-origin:0 0;transform:scaleX(1.0070);">to Word</div>
<svg class="a" style="left:338px;top:335px;" width="19" height="18" viewBox="0 0 19 18"><path d="M6.500 1.300l6.500 -1v15l-6.500 -1z" fill="#fff" stroke="#e87858" stroke-width="0.700"/><path d="M13 2h4.500v11h-4.500" fill="#fff" stroke="#ec8868" stroke-width="0.600"/><circle cx="14.800" cy="5.500" r="1.500" fill="#e03020"/><path d="M14 8.500h3M14 10h3M14 11.500h3" stroke="#ec9878" stroke-width="0.500"/><path d="M8.800 10v-5h1.500a1.400 1.400 0 0 1 0 2.800h-1.500" stroke="#e05030" stroke-width="0.700" fill="none"/><path d="M0 14.500h4v-1.500l3 2.300-3 2.300v-1.500h-4z" fill="#e02818"/></svg>
<div class="t" style="left:328.55px;top:356.53px;font-size:6.7px;color:#333;transform-origin:0 0;transform:scaleX(0.9498);">Send Graphs</div>
<div class="t" style="left:329.30px;top:365.53px;font-size:6.7px;color:#333;transform-origin:0 0;transform:scaleX(1.0104);">to PowerP...</div>
<svg class="a" style="left:338px;top:378.5px;" width="19" height="18" viewBox="0 0 19 18"><path d="M9 0.600h5.500l3.500 3.500v12.500h-9z" fill="#fff" stroke="#208838" stroke-width="1"/><path d="M14.500 0.600v3.500h3.500" fill="none" stroke="#208838" stroke-width="0.800"/><path d="M0.600 0.600h7l3.500 3.500v12.500h-10.500z" fill="#fff" stroke="#208838" stroke-width="1.100"/><path d="M7.600 0.600v3.500h3.500" fill="none" stroke="#208838" stroke-width="0.800"/><rect x="2" y="5" width="7.700" height="7.500" fill="#38a850"/><path d="M2.500 10.500l2.200-2.300 1.800 1.300 2.800-3" stroke="#fff" stroke-width="0.900" fill="none"/><rect x="9" y="13" width="9" height="3.300" fill="#208838"/><path d="M1.500 14.500h6" stroke="#208838" stroke-width="1.200"/></svg>
<div class="t" style="left:338.10px;top:399.23px;font-size:6.7px;color:#333;transform-origin:0 0;transform:scaleX(0.9236);">Graph</div>
<div class="t" style="left:332.90px;top:407.93px;font-size:6.7px;color:#333;transform-origin:0 0;transform:scaleX(0.9952);">Publisher</div>
<svg class="a" style="left:338.5px;top:420.5px;" width="19" height="19" viewBox="0 0 19 19"><path d="M2 0.500v11" stroke="#e07080" stroke-width="0.900" stroke-dasharray="0.800 0.700"/><path d="M4.500 0.500v11" stroke="#70c080" stroke-width="0.900" stroke-dasharray="0.800 0.700"/><path d="M7 0.500v11" stroke="#8080e0" stroke-width="0.900" stroke-dasharray="0.800 0.700"/><path d="M1.500 16.500l7.500-7" stroke="#8a8a18" stroke-width="2.400" stroke-linecap="round"/><path d="M8 9.500c-1.500-3 1-6 4-5.500l-2 2.300 1.700 1.700 2.300-2c.8 3-2.500 5.500-6 3.500z" fill="#8a8a18"/><rect x="8.800" y="13.500" width="2" height="4" fill="#c81828"/><rect x="12" y="11.500" width="2" height="6" fill="#18a030"/><rect x="15.300" y="9.500" width="2" height="8" fill="#1828c0"/></svg>
<div class="t" style="left:328.80px;top:440.93px;font-size:6.7px;color:#333;transform-origin:0 0;transform:scaleX(0.9463);">Graph Maker</div>
</div>
</body></html>
